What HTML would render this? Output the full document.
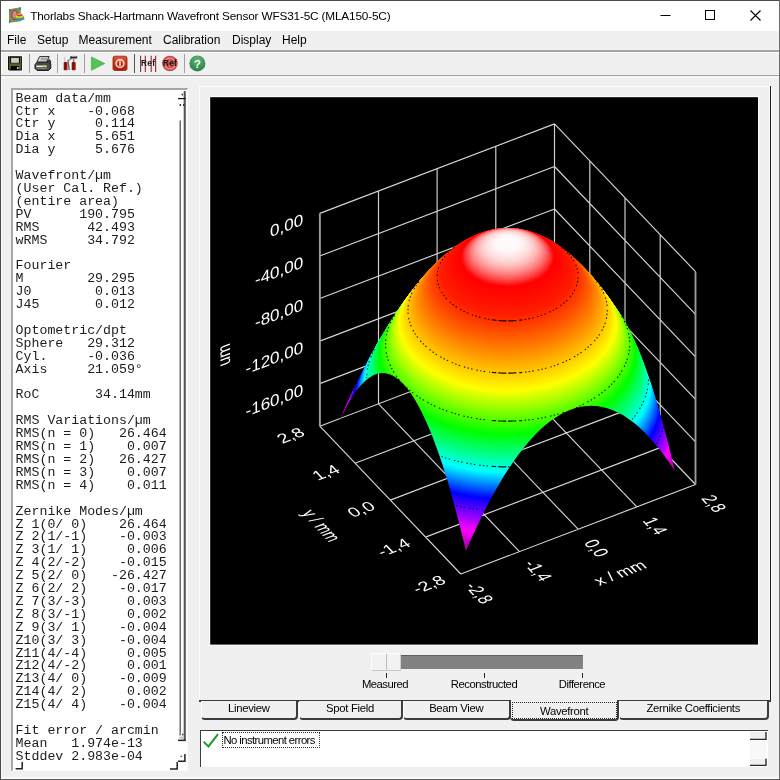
<!DOCTYPE html>
<html lang="en">
<head>
<meta charset="utf-8">
<title>Thorlabs Shack-Hartmann Wavefront Sensor WFS31-5C (MLA150-5C)</title>
<style>
html,body{margin:0;padding:0;background:#f0f0f0;}
body{width:780px;height:780px;overflow:hidden;position:relative;font-family:"Liberation Sans",sans-serif;}
#win{position:absolute;left:0;top:0;width:780px;height:780px;background:#f0f0f0;overflow:hidden;will-change:transform;}
#win>*{position:absolute;}
.bd{background:#4a4a4a;}
#title{left:1px;top:1px;width:778px;height:30px;background:#fff;}
#ttext{left:30.2px;top:9px;font-size:11.8px;line-height:15px;color:#000;white-space:nowrap;letter-spacing:-0.17px;}
#menu{left:1px;top:31px;width:778px;height:19.5px;background:#f0f0f0;}
#menu span{position:absolute;top:2.2px;font-size:12px;line-height:15px;color:#000;white-space:nowrap;}
.hl{height:1px;left:1px;width:778px;}
.vs{width:1.1px;top:54px;height:19px;background:#a0a0a0;}
#lp{left:11px;top:87.5px;width:177px;height:683px;background:#fff;border-top:2.2px solid #a6a6a6;border-left:2.4px solid #a6a6a6;border-right:1.5px solid #fafafa;border-bottom:1.5px solid #fafafa;box-sizing:border-box;}
#data{margin:0;left:15.6px;top:92.6px;font-family:"Liberation Mono",monospace;font-size:13.25px;line-height:12.905px;color:#1c1c1c;white-space:pre;}
.plot{left:0;top:0;}
.tab{box-sizing:border-box;height:19.3px;top:700.5px;background:#f0f0f0;border-right:2.2px solid #3c3c3c;border-bottom:2.4px solid #3c3c3c;border-left:1px solid #fff;border-radius:0 0 4px 4px;font-size:11.3px;line-height:15px;text-align:center;color:#000;white-space:nowrap;letter-spacing:-0.3px;}
.lbl{font-size:11.3px;line-height:14px;color:#000;white-space:nowrap;text-align:center;width:120px;letter-spacing:-0.5px;}
.tick{width:1px;height:5px;background:#222;top:672.7px;}

</style>
</head>
<body>
<div id="win">
<div class="bd" style="left:0;top:0;width:780px;height:1px"></div>
<div class="bd" style="left:0;top:0;width:1px;height:780px"></div>
<div class="bd" style="left:779px;top:0;width:1px;height:780px;background:#6e6e6e"></div>
<div class="bd" style="left:0;top:778.6px;width:780px;height:1.4px;background:#5a5a5a"></div>
<div style="left:1px;top:31px;width:1.2px;height:747px;background:#fbfbfb"></div>
<div style="left:1px;top:777.3px;width:778px;height:1.3px;background:#fbfbfb"></div>
<div id="title"></div>
<svg style="left:8px;top:6px" width="18" height="18" viewBox="8 6 18 18">
 <path d="M9 9.2L20.8 7.2V21.2L9 22.8Z" fill="#6a9a62"/>
 <path d="M9 9.2L11 8.9V11.5L9 12Z M9 20L10.5 21V22.6L9 22.8Z M19 7.5L20.8 7.2V10L19 9Z" fill="#3f7f7a"/>
 <ellipse cx="14.6" cy="14.8" rx="4.4" ry="6.4" fill="#8c8a3c"/>
 <ellipse cx="14.6" cy="14.8" rx="3.4" ry="5.2" fill="#a34a34"/>
 <ellipse cx="14.6" cy="14.8" rx="2.1" ry="3.8" fill="#c78a96"/>
 <path d="M15.4 19.6Q16.5 14 19.6 13.6Q23 14 24.6 19.2Q20 21.6 15.4 19.6Z" fill="#3a7ad0"/>
 <path d="M15.2 18.6Q16.6 13.8 19.6 13.6Q22.8 14 24.4 18.2Q20 20 15.2 18.6Z" fill="#4cb848"/>
 <path d="M15.6 17.2Q17 13.8 19.6 13.6Q22.2 13.9 23.6 16.8Q19.8 18.4 15.6 17.2Z" fill="#f0dc30"/>
 <path d="M16.6 16Q17.6 13.7 19.6 13.6Q21.6 13.8 22.6 15.6Q19.6 17 16.6 16Z" fill="#e0301c"/>
 <ellipse cx="19.4" cy="14.4" rx="1.3" ry="0.6" fill="#f6b0a0"/>
</svg>
<div id="ttext">Thorlabs Shack-Hartmann Wavefront Sensor WFS31-5C (MLA150-5C)</div>
<svg style="left:654.3px;top:4px" width="120" height="24" viewBox="0 0 120 24">
 <path d="M6.5 11.5H16.5" stroke="#000" stroke-width="1" fill="none"/>
 <rect x="51.5" y="6.5" width="9" height="9" stroke="#000" stroke-width="1" fill="none"/>
 <path d="M96.5 6.5L106.5 16.5M106.5 6.5L96.5 16.5" stroke="#000" stroke-width="1.1" fill="none"/>
</svg>
<div id="menu">
 <span style="left:6px">File</span>
 <span style="left:36px">Setup</span>
 <span style="left:77.5px">Measurement</span>
 <span style="left:162px">Calibration</span>
 <span style="left:231px">Display</span>
 <span style="left:281px">Help</span>
</div>
<div class="hl" style="top:50.3px;background:#a5a5a5;height:1.3px"></div>
<div class="hl" style="top:51.6px;background:#fafafa"></div>
<div class="hl" style="top:75.2px;background:#a5a5a5;height:1.3px"></div>
<div class="hl" style="top:76.5px;background:#fafafa"></div>
<div class="vs" style="left:28.8px"></div>
<div class="vs" style="left:56.6px"></div>
<div class="vs" style="left:84.2px"></div>
<div class="vs" style="left:134px;background:#555"></div>
<div class="vs" style="left:183.8px"></div>
<!-- toolbar icons -->
<svg style="left:0;top:52px" width="215" height="24" viewBox="0 52 215 24">
 <!-- save -->
 <rect x="7.4" y="55.6" width="15" height="15.4" rx="1" fill="#fbfbfb"/>
 <path d="M8 56.2H21.9V70.4H9L8 69.4Z" fill="#0c0c08"/>
 <rect x="9.2" y="57.2" width="11.6" height="12.2" fill="#6a6a30"/>
 <rect x="10" y="56.8" width="10" height="6.8" fill="#141410"/>
 <rect x="11.1" y="57.9" width="7.8" height="4.9" fill="#c9cbc6"/>
 <rect x="10.6" y="65.9" width="8.6" height="4.2" fill="#050505"/>
 <circle cx="17.8" cy="67.9" r="0.95" fill="#f4f4f4"/>
 <rect x="9.2" y="63.6" width="11.6" height="1" fill="#55551e"/>
 <!-- printer -->
 <path d="M39.6 56.6H49.2L46.6 62.2H36.8Z" fill="#dcdcdc" stroke="#2a2a2a" stroke-width="1"/>
 <path d="M41 58.4H47.4M40.3 59.8H46.8" stroke="#777" stroke-width="0.7"/>
 <path d="M35 64.4L37.2 62.2H48.8L50.8 64V68.2L48.6 70.4H37L35 68.4Z" fill="#4a4a4a" stroke="#151515" stroke-width="1"/>
 <path d="M46.8 62.2L49.2 59.4L50.6 61V64" fill="#3a3a3a" stroke="#151515" stroke-width="0.8"/>
 <rect x="36.2" y="65.6" width="10.4" height="1.5" fill="#f4f4f0"/>
 <rect x="42.2" y="65.6" width="4" height="1.5" fill="#c8d838"/>
 <rect x="36.4" y="67.8" width="10.6" height="1" fill="#8a8a8a"/>
 <!-- setup -->
 <rect x="63.7" y="62" width="3.8" height="8.2" rx="0.8" fill="#a01616"/>
 <rect x="71.7" y="62" width="4" height="8.2" rx="0.8" fill="#a01616"/>
 <rect x="64.6" y="62.8" width="1" height="6.6" fill="#5c0a0a"/>
 <rect x="72.7" y="62.8" width="1" height="6.6" fill="#5c0a0a"/>
 <path d="M64.8 56.8V62" stroke="#c4c4c4" stroke-width="1.1"/>
 <path d="M68 60.5L69.2 70" stroke="#666" stroke-width="1.4"/>
 <path d="M73.6 62V59" stroke="#777" stroke-width="1.4"/>
 <path d="M67.4 61L72 58.2" stroke="#888" stroke-width="1.4"/>
 <path d="M70.2 57.4H77.2" stroke="#2a2a2a" stroke-width="2.2"/>
 <path d="M72 56.4L76 56.2" stroke="#b0b0b0" stroke-width="0.8"/>
 <!-- play -->
 <path d="M91.4 56.9L104.8 63.6L91.4 70.3Z" fill="#55c257" stroke="#48a84a" stroke-width="0.7" stroke-linejoin="round"/>
 <!-- stop -->
 <defs><linearGradient id="stg" x1="0" y1="0" x2="0" y2="1"><stop offset="0" stop-color="#e2583a"/><stop offset="0.45" stop-color="#cc3418"/><stop offset="1" stop-color="#a8200c"/></linearGradient></defs>
 <rect x="113" y="56.2" width="14" height="14.2" rx="1.8" fill="url(#stg)" stroke="#8e1c0a" stroke-width="0.8"/>
 <circle cx="120" cy="63.5" r="3.9" fill="none" stroke="#fbd6c8" stroke-width="1.6"/>
 <path d="M120 60.8V66" stroke="#fbd6c8" stroke-width="1.5"/>
 <!-- Ref -->
 <path d="M140.6 55.8V72M145.3 55.8V72M151.2 55.8V72M155.6 55.8V72" stroke="#96282a" stroke-width="1.1"/>
 <text x="148.2" y="66.4" font-size="8.2" font-weight="bold" text-anchor="middle" fill="#111" font-family="'Liberation Sans',sans-serif" letter-spacing="0.4">Ref</text>
 <!-- Ref circle -->
 <circle cx="169.9" cy="63.5" r="7.8" fill="#c94a4a"/>
 <circle cx="169.9" cy="63.5" r="5.4" fill="none" stroke="#e69a9a" stroke-width="1.2"/>
 <circle cx="169.9" cy="63.5" r="2.6" fill="none" stroke="#e69a9a" stroke-width="1"/>
 <text x="170" y="66.3" font-size="8.2" font-weight="bold" text-anchor="middle" fill="#1a0a0a" font-family="'Liberation Sans',sans-serif" letter-spacing="0.3">Ref</text>
 <!-- help -->
 <defs><radialGradient id="hg" cx="0.5" cy="0.3" r="0.75"><stop offset="0" stop-color="#63b57c"/><stop offset="0.6" stop-color="#3d9455"/><stop offset="1" stop-color="#2c7a42"/></radialGradient></defs>
 <circle cx="197.4" cy="63.4" r="8" fill="url(#hg)"/>
 <text x="197.5" y="67.6" font-size="11.5" font-weight="bold" text-anchor="middle" fill="#f8fff8" font-family="'Liberation Sans',sans-serif">?</text>
</svg>
<!-- left data panel -->
<div id="lp"></div>
<svg style="left:170px;top:88px" width="20" height="684" viewBox="170 88 20 684">
 <rect x="183.7" y="91" width="2.1" height="650" fill="#555"/>
 <rect x="179.5" y="120.5" width="1.5" height="613" fill="#6a6a6a"/>
 <rect x="178" y="98" width="7.5" height="1.2" fill="#111"/>
 <rect x="181.6" y="93.8" width="1.4" height="1.6" fill="#222"/>
 <rect x="179.6" y="104" width="1.4" height="2" fill="#333"/><rect x="183" y="104" width="1.4" height="2" fill="#333"/>
 <rect x="178" y="739.6" width="7.6" height="1.5" fill="#222"/><rect x="179.4" y="733.6" width="1.4" height="1.8" fill="#444"/><rect x="182" y="733.6" width="1.4" height="1.8" fill="#444"/><rect x="179.4" y="736.6" width="4" height="2" fill="#bbb"/>
 <path d="M178 761.2H184.9V754" stroke="#222" stroke-width="1.5" fill="none"/><rect x="180.4" y="755.8" width="1.8" height="1" fill="#333"/>
 <path d="M169.6 769H177.2V762" stroke="#222" stroke-width="1.5" fill="none"/>
</svg>
<svg style="left:12px;top:758px" width="14" height="14" viewBox="12 758 14 14">
 <path d="M15.6 768.8H22.2V762" stroke="#222" stroke-width="1.5" fill="none"/>
</svg>
<!-- tab page frame -->
<div style="left:198.5px;top:86px;width:572px;height:1px;background:#fbfbfb"></div>
<div style="left:198.5px;top:86px;width:1px;height:615px;background:#fbfbfb"></div>
<div style="left:768.7px;top:86px;width:3.4px;height:614px;background:#fafafa"></div>
<div style="left:769.9px;top:86px;width:1.15px;height:615.5px;background:#1e1e1e"></div>
<div style="left:198.5px;top:699.6px;width:572.3px;height:2.1px;background:#3a3a3a"></div>
<!-- slider -->
<div style="left:401px;top:655px;width:181.5px;height:14px;background:#828282;border-top:1px solid #5e5e5e;box-sizing:border-box"></div>
<div style="left:370.5px;top:653px;width:30.5px;height:17.5px;background:#f2f2f2;box-sizing:border-box;border:1px solid #fdfdfd;border-right-color:#d0d0d0;border-bottom-color:#c8c8c8"></div>
<div style="left:385.5px;top:654px;width:1px;height:15.5px;background:#bdbdbd"></div>
<div class="tick" style="left:385.5px"></div>
<div class="tick" style="left:483.5px"></div>
<div class="tick" style="left:581.5px"></div>
<div class="lbl" style="left:325px;top:677px">Measured</div>
<div class="lbl" style="left:424px;top:677px">Reconstructed</div>
<div class="lbl" style="left:522px;top:677px">Difference</div>
<!-- tabs -->
<div class="tab" style="left:200.5px;width:97.5px">Lineview</div>
<div class="tab" style="left:298.5px;width:104px">Spot Field</div>
<div class="tab" style="left:403px;width:107.5px">Beam View</div>
<div class="tab" style="left:618.5px;width:150.5px">Zernike Coefficients</div>
<div class="tab" style="left:510.3px;width:108.7px;top:699.5px;height:21.6px;border-left:1.6px solid #3c3c3c;line-height:17px;padding-top:3.8px">Wavefront</div>
<div style="left:512.2px;top:702.4px;width:105px;height:16.6px;border:1px dotted #222;box-sizing:border-box"></div>
<!-- status panel -->
<div style="left:199.5px;top:730px;width:568px;height:37px;background:#fff;box-sizing:border-box;border-top:1.5px solid #3c3c3c;border-left:1.5px solid #3c3c3c"></div>
<svg style="left:201px;top:731px" width="22" height="20" viewBox="201 731 22 20">
 <path d="M203.6 741.6L208.4 746.4L218 734.2" stroke="#1d9a2a" stroke-width="2" fill="none" stroke-linejoin="miter"/>
</svg>
<div style="left:221.5px;top:732px;width:98px;height:15.5px;border:1px dotted #333;box-sizing:border-box"></div>
<div style="left:223.5px;top:733.3px;font-size:11.3px;line-height:14px;color:#000;white-space:nowrap;letter-spacing:-0.58px">No instrument errors</div>
<svg style="left:748px;top:730px" width="22" height="40" viewBox="748 730 22 40">
 <rect x="750" y="732" width="16.5" height="7.5" fill="#efefef"/>
 <path d="M750 739.4H766V732" stroke="#2a2a2a" stroke-width="1.4" fill="none"/>
 <rect x="750" y="759" width="16.5" height="6.5" fill="#efefef"/>
 <path d="M750 765.4H766V758.5" stroke="#2a2a2a" stroke-width="1.4" fill="none"/>
 <rect x="750" y="740.5" width="16.5" height="18" fill="#f8f8f8"/>
</svg>

<pre id="data">Beam data/mm
Ctr x    -0.068
Ctr y     0.114
Dia x     5.651
Dia y     5.676

Wavefront/µm
(User Cal. Ref.)
(entire area)
PV      190.795
RMS      42.493
wRMS     34.792

Fourier
M        29.295
J0        0.013
J45       0.012

Optometric/dpt
Sphere   29.312
Cyl.     -0.036
Axis     21.059°

RoC       34.14mm

RMS Variations/µm
RMS(n = 0)   26.464
RMS(n = 1)    0.007
RMS(n = 2)   26.427
RMS(n = 3)    0.007
RMS(n = 4)    0.011

Zernike Modes/µm
Z 1(0/ 0)    26.464
Z 2(1/-1)    -0.003
Z 3(1/ 1)     0.006
Z 4(2/-2)    -0.015
Z 5(2/ 0)   -26.427
Z 6(2/ 2)    -0.017
Z 7(3/-3)     0.003
Z 8(3/-1)     0.002
Z 9(3/ 1)    -0.004
Z10(3/ 3)    -0.004
Z11(4/-4)     0.005
Z12(4/-2)     0.001
Z13(4/ 0)    -0.009
Z14(4/ 2)     0.002
Z15(4/ 4)    -0.004

Fit error / arcmin
Mean   1.974e-13
Stddev 2.983e-04</pre>
<svg class="plot" width="780" height="780" viewBox="0 0 780 780">
<rect x="209.1" y="96.1" width="549.9" height="549.5" fill="#fcfcfc"/>
<rect x="210.2" y="97.2" width="547.8" height="547.4" fill="#000"/>
<path id="grid" d="M460.8 574L319.8 426.2M460.8 574L695.5 484.5M319.8 426.2L319.8 213.4M695.5 484.5L695.5 271.7M519.5 551.6L378.5 403.8M425.5 537.1L660.2 447.6M378.5 403.8L378.5 191M660.2 447.6L660.2 234.8M578.1 529.2L437.1 381.5M390.3 500.1L625 410.6M437.1 381.5L437.1 168.7M625 410.6L625 197.8M636.8 506.9L495.8 359.1M355 463.2L589.8 373.7M495.8 359.1L495.8 146.3M589.8 373.7L589.8 160.9M695.5 484.5L554.5 336.7M319.8 426.2L554.5 336.7M554.5 336.7L554.5 123.9M554.5 336.7L554.5 123.9M319.8 213.4L554.5 123.9M554.5 123.9L695.5 271.7M319.8 256L554.5 166.5M554.5 166.5L695.5 314.3M319.8 298.5L554.5 209M554.5 209L695.5 356.8M319.8 341.1L554.5 251.6M554.5 251.6L695.5 399.4M319.8 383.6L554.5 294.1M554.5 294.1L695.5 441.9M319.8 426.2L554.5 336.7M554.5 336.7L695.5 484.5" fill="none" stroke="#d4d4d4" stroke-width="1.15"/>
<path d="M319.8 426.2L319.8 213.4M695.5 484.5L695.5 271.7" stroke="#9a9a9a" stroke-width="1.8" fill="none"/>
<g id="surf">
<path d="M-2.495 -2.495H2.495V2.495H-2.495Z" transform="translate(507.6 445.227) matrix(41.911 -15.982 -25.179 -26.393 0 0)" fill="#960096"/>
<path d="M2.495 -2.487V2.487A3.523 3.523 0 0 1 2.487 2.495H-2.487A3.523 3.523 0 0 1 -2.495 2.487V-2.487A3.523 3.523 0 0 1 -2.487 -2.495H2.487A3.523 3.523 0 0 1 2.495 -2.487Z" transform="translate(507.6 444.613) matrix(41.911 -15.982 -25.179 -26.393 0 0)" fill="#9a009a"/>
<path d="M2.495 -2.48V2.48A3.518 3.518 0 0 1 2.48 2.495H-2.48A3.518 3.518 0 0 1 -2.495 2.48V-2.48A3.518 3.518 0 0 1 -2.48 -2.495H2.48A3.518 3.518 0 0 1 2.495 -2.48Z" transform="translate(507.6 443.999) matrix(41.911 -15.982 -25.179 -26.393 0 0)" fill="#9e009e"/>
<path d="M2.495 -2.472V2.472A3.512 3.512 0 0 1 2.472 2.495H-2.472A3.512 3.512 0 0 1 -2.495 2.472V-2.472A3.512 3.512 0 0 1 -2.472 -2.495H2.472A3.512 3.512 0 0 1 2.495 -2.472Z" transform="translate(507.6 443.384) matrix(41.911 -15.982 -25.179 -26.393 0 0)" fill="#a200a2"/>
<path d="M2.495 -2.465V2.465A3.507 3.507 0 0 1 2.465 2.495H-2.465A3.507 3.507 0 0 1 -2.495 2.465V-2.465A3.507 3.507 0 0 1 -2.465 -2.495H2.465A3.507 3.507 0 0 1 2.495 -2.465Z" transform="translate(507.6 442.77) matrix(41.911 -15.982 -25.179 -26.393 0 0)" fill="#a600a6"/>
<path d="M2.495 -2.457V2.457A3.502 3.502 0 0 1 2.457 2.495H-2.457A3.502 3.502 0 0 1 -2.495 2.457V-2.457A3.502 3.502 0 0 1 -2.457 -2.495H2.457A3.502 3.502 0 0 1 2.495 -2.457Z" transform="translate(507.6 442.156) matrix(41.911 -15.982 -25.179 -26.393 0 0)" fill="#aa00aa"/>
<path d="M2.495 -2.449V2.449A3.496 3.496 0 0 1 2.449 2.495H-2.449A3.496 3.496 0 0 1 -2.495 2.449V-2.449A3.496 3.496 0 0 1 -2.449 -2.495H2.449A3.496 3.496 0 0 1 2.495 -2.449Z" transform="translate(507.6 441.542) matrix(41.911 -15.982 -25.179 -26.393 0 0)" fill="#ae00ae"/>
<path d="M2.495 -2.442V2.442A3.491 3.491 0 0 1 2.442 2.495H-2.442A3.491 3.491 0 0 1 -2.495 2.442V-2.442A3.491 3.491 0 0 1 -2.442 -2.495H2.442A3.491 3.491 0 0 1 2.495 -2.442Z" transform="translate(507.6 440.928) matrix(41.911 -15.982 -25.179 -26.393 0 0)" fill="#b200b2"/>
<path d="M2.495 -2.434V2.434A3.485 3.485 0 0 1 2.434 2.495H-2.434A3.485 3.485 0 0 1 -2.495 2.434V-2.434A3.485 3.485 0 0 1 -2.434 -2.495H2.434A3.485 3.485 0 0 1 2.495 -2.434Z" transform="translate(507.6 440.313) matrix(41.911 -15.982 -25.179 -26.393 0 0)" fill="#b600b6"/>
<path d="M2.495 -2.426V2.426A3.48 3.48 0 0 1 2.426 2.495H-2.426A3.48 3.48 0 0 1 -2.495 2.426V-2.426A3.48 3.48 0 0 1 -2.426 -2.495H2.426A3.48 3.48 0 0 1 2.495 -2.426Z" transform="translate(507.6 439.699) matrix(41.911 -15.982 -25.179 -26.393 0 0)" fill="#ba00ba"/>
<path d="M2.495 -2.418V2.418A3.475 3.475 0 0 1 2.418 2.495H-2.418A3.475 3.475 0 0 1 -2.495 2.418V-2.418A3.475 3.475 0 0 1 -2.418 -2.495H2.418A3.475 3.475 0 0 1 2.495 -2.418Z" transform="translate(507.6 439.085) matrix(41.911 -15.982 -25.179 -26.393 0 0)" fill="#be00be"/>
<path d="M2.495 -2.41V2.41A3.469 3.469 0 0 1 2.41 2.495H-2.41A3.469 3.469 0 0 1 -2.495 2.41V-2.41A3.469 3.469 0 0 1 -2.41 -2.495H2.41A3.469 3.469 0 0 1 2.495 -2.41Z" transform="translate(507.6 438.471) matrix(41.911 -15.982 -25.179 -26.393 0 0)" fill="#c200c2"/>
<path d="M2.495 -2.403V2.403A3.464 3.464 0 0 1 2.403 2.495H-2.403A3.464 3.464 0 0 1 -2.495 2.403V-2.403A3.464 3.464 0 0 1 -2.403 -2.495H2.403A3.464 3.464 0 0 1 2.495 -2.403Z" transform="translate(507.6 437.857) matrix(41.911 -15.982 -25.179 -26.393 0 0)" fill="#c600c6"/>
<path d="M2.495 -2.395V2.395A3.458 3.458 0 0 1 2.395 2.495H-2.395A3.458 3.458 0 0 1 -2.495 2.395V-2.395A3.458 3.458 0 0 1 -2.395 -2.495H2.395A3.458 3.458 0 0 1 2.495 -2.395Z" transform="translate(507.6 437.243) matrix(41.911 -15.982 -25.179 -26.393 0 0)" fill="#ca00ca"/>
<path d="M2.495 -2.387V2.387A3.453 3.453 0 0 1 2.387 2.495H-2.387A3.453 3.453 0 0 1 -2.495 2.387V-2.387A3.453 3.453 0 0 1 -2.387 -2.495H2.387A3.453 3.453 0 0 1 2.495 -2.387Z" transform="translate(507.6 436.628) matrix(41.911 -15.982 -25.179 -26.393 0 0)" fill="#ce00ce"/>
<path d="M2.495 -2.379V2.379A3.447 3.447 0 0 1 2.379 2.495H-2.379A3.447 3.447 0 0 1 -2.495 2.379V-2.379A3.447 3.447 0 0 1 -2.379 -2.495H2.379A3.447 3.447 0 0 1 2.495 -2.379Z" transform="translate(507.6 436.014) matrix(41.911 -15.982 -25.179 -26.393 0 0)" fill="#d200d2"/>
<path d="M2.495 -2.371V2.371A3.442 3.442 0 0 1 2.371 2.495H-2.371A3.442 3.442 0 0 1 -2.495 2.371V-2.371A3.442 3.442 0 0 1 -2.371 -2.495H2.371A3.442 3.442 0 0 1 2.495 -2.371Z" transform="translate(507.6 435.4) matrix(41.911 -15.982 -25.179 -26.393 0 0)" fill="#d600d6"/>
<path d="M2.495 -2.363V2.363A3.436 3.436 0 0 1 2.363 2.495H-2.363A3.436 3.436 0 0 1 -2.495 2.363V-2.363A3.436 3.436 0 0 1 -2.363 -2.495H2.363A3.436 3.436 0 0 1 2.495 -2.363Z" transform="translate(507.6 434.786) matrix(41.911 -15.982 -25.179 -26.393 0 0)" fill="#da00da"/>
<path d="M2.495 -2.355V2.355A3.431 3.431 0 0 1 2.355 2.495H-2.355A3.431 3.431 0 0 1 -2.495 2.355V-2.355A3.431 3.431 0 0 1 -2.355 -2.495H2.355A3.431 3.431 0 0 1 2.495 -2.355Z" transform="translate(507.6 434.172) matrix(41.911 -15.982 -25.179 -26.393 0 0)" fill="#de00de"/>
<path d="M2.495 -2.347V2.347A3.425 3.425 0 0 1 2.347 2.495H-2.347A3.425 3.425 0 0 1 -2.495 2.347V-2.347A3.425 3.425 0 0 1 -2.347 -2.495H2.347A3.425 3.425 0 0 1 2.495 -2.347Z" transform="translate(507.6 433.558) matrix(41.911 -15.982 -25.179 -26.393 0 0)" fill="#e200e2"/>
<path d="M2.495 -2.339V2.339A3.42 3.42 0 0 1 2.339 2.495H-2.339A3.42 3.42 0 0 1 -2.495 2.339V-2.339A3.42 3.42 0 0 1 -2.339 -2.495H2.339A3.42 3.42 0 0 1 2.495 -2.339Z" transform="translate(507.6 432.943) matrix(41.911 -15.982 -25.179 -26.393 0 0)" fill="#e600e6"/>
<path d="M2.495 -2.331V2.331A3.414 3.414 0 0 1 2.331 2.495H-2.331A3.414 3.414 0 0 1 -2.495 2.331V-2.331A3.414 3.414 0 0 1 -2.331 -2.495H2.331A3.414 3.414 0 0 1 2.495 -2.331Z" transform="translate(507.6 432.329) matrix(41.911 -15.982 -25.179 -26.393 0 0)" fill="#ea00ea"/>
<path d="M2.495 -2.323V2.323A3.409 3.409 0 0 1 2.323 2.495H-2.323A3.409 3.409 0 0 1 -2.495 2.323V-2.323A3.409 3.409 0 0 1 -2.323 -2.495H2.323A3.409 3.409 0 0 1 2.495 -2.323Z" transform="translate(507.6 431.715) matrix(41.911 -15.982 -25.179 -26.393 0 0)" fill="#ee00ee"/>
<path d="M2.495 -2.315V2.315A3.403 3.403 0 0 1 2.315 2.495H-2.315A3.403 3.403 0 0 1 -2.495 2.315V-2.315A3.403 3.403 0 0 1 -2.315 -2.495H2.315A3.403 3.403 0 0 1 2.495 -2.315Z" transform="translate(507.6 431.101) matrix(41.911 -15.982 -25.179 -26.393 0 0)" fill="#f100f1"/>
<path d="M2.495 -2.306V2.306A3.398 3.398 0 0 1 2.306 2.495H-2.306A3.398 3.398 0 0 1 -2.495 2.306V-2.306A3.398 3.398 0 0 1 -2.306 -2.495H2.306A3.398 3.398 0 0 1 2.495 -2.306Z" transform="translate(507.6 430.487) matrix(41.911 -15.982 -25.179 -26.393 0 0)" fill="#f500f5"/>
<path d="M2.495 -2.298V2.298A3.392 3.392 0 0 1 2.298 2.495H-2.298A3.392 3.392 0 0 1 -2.495 2.298V-2.298A3.392 3.392 0 0 1 -2.298 -2.495H2.298A3.392 3.392 0 0 1 2.495 -2.298Z" transform="translate(507.6 429.873) matrix(41.911 -15.982 -25.179 -26.393 0 0)" fill="#f900f9"/>
<path d="M2.495 -2.29V2.29A3.387 3.387 0 0 1 2.29 2.495H-2.29A3.387 3.387 0 0 1 -2.495 2.29V-2.29A3.387 3.387 0 0 1 -2.29 -2.495H2.29A3.387 3.387 0 0 1 2.495 -2.29Z" transform="translate(507.6 429.258) matrix(41.911 -15.982 -25.179 -26.393 0 0)" fill="#fd00fd"/>
<path d="M2.495 -2.282V2.282A3.381 3.381 0 0 1 2.282 2.495H-2.282A3.381 3.381 0 0 1 -2.495 2.282V-2.282A3.381 3.381 0 0 1 -2.282 -2.495H2.282A3.381 3.381 0 0 1 2.495 -2.282Z" transform="translate(507.6 428.644) matrix(41.911 -15.982 -25.179 -26.393 0 0)" fill="#fb00ff"/>
<path d="M2.495 -2.273V2.273A3.375 3.375 0 0 1 2.273 2.495H-2.273A3.375 3.375 0 0 1 -2.495 2.273V-2.273A3.375 3.375 0 0 1 -2.273 -2.495H2.273A3.375 3.375 0 0 1 2.495 -2.273Z" transform="translate(507.6 428.03) matrix(41.911 -15.982 -25.179 -26.393 0 0)" fill="#f500ff"/>
<path d="M2.495 -2.265V2.265A3.37 3.37 0 0 1 2.265 2.495H-2.265A3.37 3.37 0 0 1 -2.495 2.265V-2.265A3.37 3.37 0 0 1 -2.265 -2.495H2.265A3.37 3.37 0 0 1 2.495 -2.265Z" transform="translate(507.6 427.416) matrix(41.911 -15.982 -25.179 -26.393 0 0)" fill="#f000ff"/>
<path d="M2.495 -2.257V2.257A3.364 3.364 0 0 1 2.257 2.495H-2.257A3.364 3.364 0 0 1 -2.495 2.257V-2.257A3.364 3.364 0 0 1 -2.257 -2.495H2.257A3.364 3.364 0 0 1 2.495 -2.257Z" transform="translate(507.6 426.802) matrix(41.911 -15.982 -25.179 -26.393 0 0)" fill="#ea00ff"/>
<path d="M2.495 -2.248V2.248A3.359 3.359 0 0 1 2.248 2.495H-2.248A3.359 3.359 0 0 1 -2.495 2.248V-2.248A3.359 3.359 0 0 1 -2.248 -2.495H2.248A3.359 3.359 0 0 1 2.495 -2.248Z" transform="translate(507.6 426.188) matrix(41.911 -15.982 -25.179 -26.393 0 0)" fill="#e400ff"/>
<path d="M2.495 -2.24V2.24A3.353 3.353 0 0 1 2.24 2.495H-2.24A3.353 3.353 0 0 1 -2.495 2.24V-2.24A3.353 3.353 0 0 1 -2.24 -2.495H2.24A3.353 3.353 0 0 1 2.495 -2.24Z" transform="translate(507.6 425.573) matrix(41.911 -15.982 -25.179 -26.393 0 0)" fill="#de00ff"/>
<path d="M2.495 -2.232V2.232A3.347 3.347 0 0 1 2.232 2.495H-2.232A3.347 3.347 0 0 1 -2.495 2.232V-2.232A3.347 3.347 0 0 1 -2.232 -2.495H2.232A3.347 3.347 0 0 1 2.495 -2.232Z" transform="translate(507.6 424.959) matrix(41.911 -15.982 -25.179 -26.393 0 0)" fill="#d800ff"/>
<path d="M2.495 -2.223V2.223A3.342 3.342 0 0 1 2.223 2.495H-2.223A3.342 3.342 0 0 1 -2.495 2.223V-2.223A3.342 3.342 0 0 1 -2.223 -2.495H2.223A3.342 3.342 0 0 1 2.495 -2.223Z" transform="translate(507.6 424.345) matrix(41.911 -15.982 -25.179 -26.393 0 0)" fill="#d200ff"/>
<path d="M2.495 -2.215V2.215A3.336 3.336 0 0 1 2.215 2.495H-2.215A3.336 3.336 0 0 1 -2.495 2.215V-2.215A3.336 3.336 0 0 1 -2.215 -2.495H2.215A3.336 3.336 0 0 1 2.495 -2.215Z" transform="translate(507.6 423.731) matrix(41.911 -15.982 -25.179 -26.393 0 0)" fill="#cc00ff"/>
<path d="M2.495 -2.206V2.206A3.33 3.33 0 0 1 2.206 2.495H-2.206A3.33 3.33 0 0 1 -2.495 2.206V-2.206A3.33 3.33 0 0 1 -2.206 -2.495H2.206A3.33 3.33 0 0 1 2.495 -2.206Z" transform="translate(507.6 423.117) matrix(41.911 -15.982 -25.179 -26.393 0 0)" fill="#c600ff"/>
<path d="M2.495 -2.198V2.198A3.325 3.325 0 0 1 2.198 2.495H-2.198A3.325 3.325 0 0 1 -2.495 2.198V-2.198A3.325 3.325 0 0 1 -2.198 -2.495H2.198A3.325 3.325 0 0 1 2.495 -2.198Z" transform="translate(507.6 422.502) matrix(41.911 -15.982 -25.179 -26.393 0 0)" fill="#c000ff"/>
<path d="M2.495 -2.189V2.189A3.319 3.319 0 0 1 2.189 2.495H-2.189A3.319 3.319 0 0 1 -2.495 2.189V-2.189A3.319 3.319 0 0 1 -2.189 -2.495H2.189A3.319 3.319 0 0 1 2.495 -2.189Z" transform="translate(507.6 421.888) matrix(41.911 -15.982 -25.179 -26.393 0 0)" fill="#ba00ff"/>
<path d="M2.495 -2.18V2.18A3.313 3.313 0 0 1 2.18 2.495H-2.18A3.313 3.313 0 0 1 -2.495 2.18V-2.18A3.313 3.313 0 0 1 -2.18 -2.495H2.18A3.313 3.313 0 0 1 2.495 -2.18Z" transform="translate(507.6 421.274) matrix(41.911 -15.982 -25.179 -26.393 0 0)" fill="#b400ff"/>
<path d="M2.495 -2.172V2.172A3.308 3.308 0 0 1 2.172 2.495H-2.172A3.308 3.308 0 0 1 -2.495 2.172V-2.172A3.308 3.308 0 0 1 -2.172 -2.495H2.172A3.308 3.308 0 0 1 2.495 -2.172Z" transform="translate(507.6 420.66) matrix(41.911 -15.982 -25.179 -26.393 0 0)" fill="#ae00ff"/>
<path d="M2.495 -2.163V2.163A3.302 3.302 0 0 1 2.163 2.495H-2.163A3.302 3.302 0 0 1 -2.495 2.163V-2.163A3.302 3.302 0 0 1 -2.163 -2.495H2.163A3.302 3.302 0 0 1 2.495 -2.163Z" transform="translate(507.6 420.046) matrix(41.911 -15.982 -25.179 -26.393 0 0)" fill="#a800ff"/>
<path d="M2.495 -2.154V2.154A3.296 3.296 0 0 1 2.154 2.495H-2.154A3.296 3.296 0 0 1 -2.495 2.154V-2.154A3.296 3.296 0 0 1 -2.154 -2.495H2.154A3.296 3.296 0 0 1 2.495 -2.154Z" transform="translate(507.6 419.432) matrix(41.911 -15.982 -25.179 -26.393 0 0)" fill="#a200ff"/>
<path d="M2.495 -2.145V2.145A3.291 3.291 0 0 1 2.145 2.495H-2.145A3.291 3.291 0 0 1 -2.495 2.145V-2.145A3.291 3.291 0 0 1 -2.145 -2.495H2.145A3.291 3.291 0 0 1 2.495 -2.145Z" transform="translate(507.6 418.817) matrix(41.911 -15.982 -25.179 -26.393 0 0)" fill="#9c00ff"/>
<path d="M2.495 -2.137V2.137A3.285 3.285 0 0 1 2.137 2.495H-2.137A3.285 3.285 0 0 1 -2.495 2.137V-2.137A3.285 3.285 0 0 1 -2.137 -2.495H2.137A3.285 3.285 0 0 1 2.495 -2.137Z" transform="translate(507.6 418.203) matrix(41.911 -15.982 -25.179 -26.393 0 0)" fill="#9600ff"/>
<path d="M2.495 -2.128V2.128A3.279 3.279 0 0 1 2.128 2.495H-2.128A3.279 3.279 0 0 1 -2.495 2.128V-2.128A3.279 3.279 0 0 1 -2.128 -2.495H2.128A3.279 3.279 0 0 1 2.495 -2.128Z" transform="translate(507.6 417.589) matrix(41.911 -15.982 -25.179 -26.393 0 0)" fill="#9000ff"/>
<path d="M2.495 -2.119V2.119A3.273 3.273 0 0 1 2.119 2.495H-2.119A3.273 3.273 0 0 1 -2.495 2.119V-2.119A3.273 3.273 0 0 1 -2.119 -2.495H2.119A3.273 3.273 0 0 1 2.495 -2.119Z" transform="translate(507.6 416.975) matrix(41.911 -15.982 -25.179 -26.393 0 0)" fill="#8a00ff"/>
<path d="M2.495 -2.11V2.11A3.268 3.268 0 0 1 2.11 2.495H-2.11A3.268 3.268 0 0 1 -2.495 2.11V-2.11A3.268 3.268 0 0 1 -2.11 -2.495H2.11A3.268 3.268 0 0 1 2.495 -2.11Z" transform="translate(507.6 416.361) matrix(41.911 -15.982 -25.179 -26.393 0 0)" fill="#8500ff"/>
<path d="M2.495 -2.101V2.101A3.262 3.262 0 0 1 2.101 2.495H-2.101A3.262 3.262 0 0 1 -2.495 2.101V-2.101A3.262 3.262 0 0 1 -2.101 -2.495H2.101A3.262 3.262 0 0 1 2.495 -2.101Z" transform="translate(507.6 415.747) matrix(41.911 -15.982 -25.179 -26.393 0 0)" fill="#7f00ff"/>
<path d="M2.495 -2.092V2.092A3.256 3.256 0 0 1 2.092 2.495H-2.092A3.256 3.256 0 0 1 -2.495 2.092V-2.092A3.256 3.256 0 0 1 -2.092 -2.495H2.092A3.256 3.256 0 0 1 2.495 -2.092Z" transform="translate(507.6 415.132) matrix(41.911 -15.982 -25.179 -26.393 0 0)" fill="#7900ff"/>
<path d="M2.495 -2.083V2.083A3.25 3.25 0 0 1 2.083 2.495H-2.083A3.25 3.25 0 0 1 -2.495 2.083V-2.083A3.25 3.25 0 0 1 -2.083 -2.495H2.083A3.25 3.25 0 0 1 2.495 -2.083Z" transform="translate(507.6 414.518) matrix(41.911 -15.982 -25.179 -26.393 0 0)" fill="#7300ff"/>
<path d="M2.495 -2.074V2.074A3.244 3.244 0 0 1 2.074 2.495H-2.074A3.244 3.244 0 0 1 -2.495 2.074V-2.074A3.244 3.244 0 0 1 -2.074 -2.495H2.074A3.244 3.244 0 0 1 2.495 -2.074Z" transform="translate(507.6 413.904) matrix(41.911 -15.982 -25.179 -26.393 0 0)" fill="#6d00ff"/>
<path d="M2.495 -2.065V2.065A3.239 3.239 0 0 1 2.065 2.495H-2.065A3.239 3.239 0 0 1 -2.495 2.065V-2.065A3.239 3.239 0 0 1 -2.065 -2.495H2.065A3.239 3.239 0 0 1 2.495 -2.065Z" transform="translate(507.6 413.29) matrix(41.911 -15.982 -25.179 -26.393 0 0)" fill="#6700ff"/>
<path d="M2.495 -2.056V2.056A3.233 3.233 0 0 1 2.056 2.495H-2.056A3.233 3.233 0 0 1 -2.495 2.056V-2.056A3.233 3.233 0 0 1 -2.056 -2.495H2.056A3.233 3.233 0 0 1 2.495 -2.056Z" transform="translate(507.6 412.676) matrix(41.911 -15.982 -25.179 -26.393 0 0)" fill="#6100ff"/>
<path d="M2.495 -2.046V2.046A3.227 3.227 0 0 1 2.046 2.495H-2.046A3.227 3.227 0 0 1 -2.495 2.046V-2.046A3.227 3.227 0 0 1 -2.046 -2.495H2.046A3.227 3.227 0 0 1 2.495 -2.046Z" transform="translate(507.6 412.062) matrix(41.911 -15.982 -25.179 -26.393 0 0)" fill="#5b00ff"/>
<path d="M2.495 -2.037V2.037A3.221 3.221 0 0 1 2.037 2.495H-2.037A3.221 3.221 0 0 1 -2.495 2.037V-2.037A3.221 3.221 0 0 1 -2.037 -2.495H2.037A3.221 3.221 0 0 1 2.495 -2.037Z" transform="translate(507.6 411.447) matrix(41.911 -15.982 -25.179 -26.393 0 0)" fill="#5500ff"/>
<path d="M2.495 -2.028V2.028A3.215 3.215 0 0 1 2.028 2.495H-2.028A3.215 3.215 0 0 1 -2.495 2.028V-2.028A3.215 3.215 0 0 1 -2.028 -2.495H2.028A3.215 3.215 0 0 1 2.495 -2.028Z" transform="translate(507.6 410.833) matrix(41.911 -15.982 -25.179 -26.393 0 0)" fill="#4f00ff"/>
<path d="M2.495 -2.019V2.019A3.209 3.209 0 0 1 2.019 2.495H-2.019A3.209 3.209 0 0 1 -2.495 2.019V-2.019A3.209 3.209 0 0 1 -2.019 -2.495H2.019A3.209 3.209 0 0 1 2.495 -2.019Z" transform="translate(507.6 410.219) matrix(41.911 -15.982 -25.179 -26.393 0 0)" fill="#4900ff"/>
<path d="M2.495 -2.009V2.009A3.203 3.203 0 0 1 2.009 2.495H-2.009A3.203 3.203 0 0 1 -2.495 2.009V-2.009A3.203 3.203 0 0 1 -2.009 -2.495H2.009A3.203 3.203 0 0 1 2.495 -2.009Z" transform="translate(507.6 409.605) matrix(41.911 -15.982 -25.179 -26.393 0 0)" fill="#4300ff"/>
<path d="M2.495 -2V2A3.198 3.198 0 0 1 2 2.495H-2A3.198 3.198 0 0 1 -2.495 2V-2A3.198 3.198 0 0 1 -2 -2.495H2A3.198 3.198 0 0 1 2.495 -2Z" transform="translate(507.6 408.991) matrix(41.911 -15.982 -25.179 -26.393 0 0)" fill="#3d00ff"/>
<path d="M2.495 -1.99V1.99A3.192 3.192 0 0 1 1.99 2.495H-1.99A3.192 3.192 0 0 1 -2.495 1.99V-1.99A3.192 3.192 0 0 1 -1.99 -2.495H1.99A3.192 3.192 0 0 1 2.495 -1.99Z" transform="translate(507.6 408.377) matrix(41.911 -15.982 -25.179 -26.393 0 0)" fill="#3700ff"/>
<path d="M2.495 -1.981V1.981A3.186 3.186 0 0 1 1.981 2.495H-1.981A3.186 3.186 0 0 1 -2.495 1.981V-1.981A3.186 3.186 0 0 1 -1.981 -2.495H1.981A3.186 3.186 0 0 1 2.495 -1.981Z" transform="translate(507.6 407.762) matrix(41.911 -15.982 -25.179 -26.393 0 0)" fill="#3100ff"/>
<path d="M2.495 -1.971V1.971A3.18 3.18 0 0 1 1.971 2.495H-1.971A3.18 3.18 0 0 1 -2.495 1.971V-1.971A3.18 3.18 0 0 1 -1.971 -2.495H1.971A3.18 3.18 0 0 1 2.495 -1.971Z" transform="translate(507.6 407.148) matrix(41.911 -15.982 -25.179 -26.393 0 0)" fill="#2b00ff"/>
<path d="M2.495 -1.962V1.962A3.174 3.174 0 0 1 1.962 2.495H-1.962A3.174 3.174 0 0 1 -2.495 1.962V-1.962A3.174 3.174 0 0 1 -1.962 -2.495H1.962A3.174 3.174 0 0 1 2.495 -1.962Z" transform="translate(507.6 406.534) matrix(41.911 -15.982 -25.179 -26.393 0 0)" fill="#2500ff"/>
<path d="M2.495 -1.952V1.952A3.168 3.168 0 0 1 1.952 2.495H-1.952A3.168 3.168 0 0 1 -2.495 1.952V-1.952A3.168 3.168 0 0 1 -1.952 -2.495H1.952A3.168 3.168 0 0 1 2.495 -1.952Z" transform="translate(507.6 405.92) matrix(41.911 -15.982 -25.179 -26.393 0 0)" fill="#2000ff"/>
<path d="M2.495 -1.942V1.942A3.162 3.162 0 0 1 1.942 2.495H-1.942A3.162 3.162 0 0 1 -2.495 1.942V-1.942A3.162 3.162 0 0 1 -1.942 -2.495H1.942A3.162 3.162 0 0 1 2.495 -1.942Z" transform="translate(507.6 405.306) matrix(41.911 -15.982 -25.179 -26.393 0 0)" fill="#1a00ff"/>
<path d="M2.495 -1.933V1.933A3.156 3.156 0 0 1 1.933 2.495H-1.933A3.156 3.156 0 0 1 -2.495 1.933V-1.933A3.156 3.156 0 0 1 -1.933 -2.495H1.933A3.156 3.156 0 0 1 2.495 -1.933Z" transform="translate(507.6 404.691) matrix(41.911 -15.982 -25.179 -26.393 0 0)" fill="#1400ff"/>
<path d="M2.495 -1.923V1.923A3.15 3.15 0 0 1 1.923 2.495H-1.923A3.15 3.15 0 0 1 -2.495 1.923V-1.923A3.15 3.15 0 0 1 -1.923 -2.495H1.923A3.15 3.15 0 0 1 2.495 -1.923Z" transform="translate(507.6 404.077) matrix(41.911 -15.982 -25.179 -26.393 0 0)" fill="#0e00ff"/>
<path d="M2.495 -1.913V1.913A3.144 3.144 0 0 1 1.913 2.495H-1.913A3.144 3.144 0 0 1 -2.495 1.913V-1.913A3.144 3.144 0 0 1 -1.913 -2.495H1.913A3.144 3.144 0 0 1 2.495 -1.913Z" transform="translate(507.6 403.463) matrix(41.911 -15.982 -25.179 -26.393 0 0)" fill="#0800ff"/>
<path d="M2.495 -1.903V1.903A3.138 3.138 0 0 1 1.903 2.495H-1.903A3.138 3.138 0 0 1 -2.495 1.903V-1.903A3.138 3.138 0 0 1 -1.903 -2.495H1.903A3.138 3.138 0 0 1 2.495 -1.903Z" transform="translate(507.6 402.849) matrix(41.911 -15.982 -25.179 -26.393 0 0)" fill="#0200ff"/>
<path d="M2.495 -1.893V1.893A3.132 3.132 0 0 1 1.893 2.495H-1.893A3.132 3.132 0 0 1 -2.495 1.893V-1.893A3.132 3.132 0 0 1 -1.893 -2.495H1.893A3.132 3.132 0 0 1 2.495 -1.893Z" transform="translate(507.6 402.235) matrix(41.911 -15.982 -25.179 -26.393 0 0)" fill="#0005ff"/>
<path d="M2.495 -1.883V1.883A3.126 3.126 0 0 1 1.883 2.495H-1.883A3.126 3.126 0 0 1 -2.495 1.883V-1.883A3.126 3.126 0 0 1 -1.883 -2.495H1.883A3.126 3.126 0 0 1 2.495 -1.883Z" transform="translate(507.6 401.621) matrix(41.911 -15.982 -25.179 -26.393 0 0)" fill="#000dff"/>
<path d="M2.495 -1.873V1.873A3.12 3.12 0 0 1 1.873 2.495H-1.873A3.12 3.12 0 0 1 -2.495 1.873V-1.873A3.12 3.12 0 0 1 -1.873 -2.495H1.873A3.12 3.12 0 0 1 2.495 -1.873Z" transform="translate(507.6 401.006) matrix(41.911 -15.982 -25.179 -26.393 0 0)" fill="#0015ff"/>
<path d="M2.495 -1.863V1.863A3.114 3.114 0 0 1 1.863 2.495H-1.863A3.114 3.114 0 0 1 -2.495 1.863V-1.863A3.114 3.114 0 0 1 -1.863 -2.495H1.863A3.114 3.114 0 0 1 2.495 -1.863Z" transform="translate(507.6 400.392) matrix(41.911 -15.982 -25.179 -26.393 0 0)" fill="#001dff"/>
<path d="M2.495 -1.853V1.853A3.108 3.108 0 0 1 1.853 2.495H-1.853A3.108 3.108 0 0 1 -2.495 1.853V-1.853A3.108 3.108 0 0 1 -1.853 -2.495H1.853A3.108 3.108 0 0 1 2.495 -1.853Z" transform="translate(507.6 399.778) matrix(41.911 -15.982 -25.179 -26.393 0 0)" fill="#0024ff"/>
<path d="M2.495 -1.843V1.843A3.102 3.102 0 0 1 1.843 2.495H-1.843A3.102 3.102 0 0 1 -2.495 1.843V-1.843A3.102 3.102 0 0 1 -1.843 -2.495H1.843A3.102 3.102 0 0 1 2.495 -1.843Z" transform="translate(507.6 399.164) matrix(41.911 -15.982 -25.179 -26.393 0 0)" fill="#002cff"/>
<path d="M2.495 -1.832V1.832A3.096 3.096 0 0 1 1.832 2.495H-1.832A3.096 3.096 0 0 1 -2.495 1.832V-1.832A3.096 3.096 0 0 1 -1.832 -2.495H1.832A3.096 3.096 0 0 1 2.495 -1.832Z" transform="translate(507.6 398.55) matrix(41.911 -15.982 -25.179 -26.393 0 0)" fill="#0034ff"/>
<path d="M2.495 -1.822V1.822A3.09 3.09 0 0 1 1.822 2.495H-1.822A3.09 3.09 0 0 1 -2.495 1.822V-1.822A3.09 3.09 0 0 1 -1.822 -2.495H1.822A3.09 3.09 0 0 1 2.495 -1.822Z" transform="translate(507.6 397.936) matrix(41.911 -15.982 -25.179 -26.393 0 0)" fill="#003cff"/>
<path d="M2.495 -1.812V1.812A3.083 3.083 0 0 1 1.812 2.495H-1.812A3.083 3.083 0 0 1 -2.495 1.812V-1.812A3.083 3.083 0 0 1 -1.812 -2.495H1.812A3.083 3.083 0 0 1 2.495 -1.812Z" transform="translate(507.6 397.321) matrix(41.911 -15.982 -25.179 -26.393 0 0)" fill="#0043ff"/>
<path d="M2.495 -1.801V1.801A3.077 3.077 0 0 1 1.801 2.495H-1.801A3.077 3.077 0 0 1 -2.495 1.801V-1.801A3.077 3.077 0 0 1 -1.801 -2.495H1.801A3.077 3.077 0 0 1 2.495 -1.801Z" transform="translate(507.6 396.707) matrix(41.911 -15.982 -25.179 -26.393 0 0)" fill="#004bff"/>
<path d="M2.495 -1.791V1.791A3.071 3.071 0 0 1 1.791 2.495H-1.791A3.071 3.071 0 0 1 -2.495 1.791V-1.791A3.071 3.071 0 0 1 -1.791 -2.495H1.791A3.071 3.071 0 0 1 2.495 -1.791Z" transform="translate(507.6 396.093) matrix(41.911 -15.982 -25.179 -26.393 0 0)" fill="#0053ff"/>
<path d="M2.495 -1.78V1.78A3.065 3.065 0 0 1 1.78 2.495H-1.78A3.065 3.065 0 0 1 -2.495 1.78V-1.78A3.065 3.065 0 0 1 -1.78 -2.495H1.78A3.065 3.065 0 0 1 2.495 -1.78Z" transform="translate(507.6 395.479) matrix(41.911 -15.982 -25.179 -26.393 0 0)" fill="#005aff"/>
<path d="M2.495 -1.77V1.77A3.059 3.059 0 0 1 1.77 2.495H-1.77A3.059 3.059 0 0 1 -2.495 1.77V-1.77A3.059 3.059 0 0 1 -1.77 -2.495H1.77A3.059 3.059 0 0 1 2.495 -1.77Z" transform="translate(507.6 394.865) matrix(41.911 -15.982 -25.179 -26.393 0 0)" fill="#0062ff"/>
<path d="M2.495 -1.759V1.759A3.053 3.053 0 0 1 1.759 2.495H-1.759A3.053 3.053 0 0 1 -2.495 1.759V-1.759A3.053 3.053 0 0 1 -1.759 -2.495H1.759A3.053 3.053 0 0 1 2.495 -1.759Z" transform="translate(507.6 394.251) matrix(41.911 -15.982 -25.179 -26.393 0 0)" fill="#006aff"/>
<path d="M2.495 -1.748V1.748A3.046 3.046 0 0 1 1.748 2.495H-1.748A3.046 3.046 0 0 1 -2.495 1.748V-1.748A3.046 3.046 0 0 1 -1.748 -2.495H1.748A3.046 3.046 0 0 1 2.495 -1.748Z" transform="translate(507.6 393.636) matrix(41.911 -15.982 -25.179 -26.393 0 0)" fill="#0072ff"/>
<path d="M2.495 -1.737V1.737A3.04 3.04 0 0 1 1.737 2.495H-1.737A3.04 3.04 0 0 1 -2.495 1.737V-1.737A3.04 3.04 0 0 1 -1.737 -2.495H1.737A3.04 3.04 0 0 1 2.495 -1.737Z" transform="translate(507.6 393.022) matrix(41.911 -15.982 -25.179 -26.393 0 0)" fill="#0079ff"/>
<path d="M2.495 -1.726V1.726A3.034 3.034 0 0 1 1.726 2.495H-1.726A3.034 3.034 0 0 1 -2.495 1.726V-1.726A3.034 3.034 0 0 1 -1.726 -2.495H1.726A3.034 3.034 0 0 1 2.495 -1.726Z" transform="translate(507.6 392.408) matrix(41.911 -15.982 -25.179 -26.393 0 0)" fill="#0081ff"/>
<path d="M2.495 -1.715V1.715A3.028 3.028 0 0 1 1.715 2.495H-1.715A3.028 3.028 0 0 1 -2.495 1.715V-1.715A3.028 3.028 0 0 1 -1.715 -2.495H1.715A3.028 3.028 0 0 1 2.495 -1.715Z" transform="translate(507.6 391.794) matrix(41.911 -15.982 -25.179 -26.393 0 0)" fill="#0089ff"/>
<path d="M2.495 -1.704V1.704A3.022 3.022 0 0 1 1.704 2.495H-1.704A3.022 3.022 0 0 1 -2.495 1.704V-1.704A3.022 3.022 0 0 1 -1.704 -2.495H1.704A3.022 3.022 0 0 1 2.495 -1.704Z" transform="translate(507.6 391.18) matrix(41.911 -15.982 -25.179 -26.393 0 0)" fill="#0091ff"/>
<path d="M2.495 -1.693V1.693A3.015 3.015 0 0 1 1.693 2.495H-1.693A3.015 3.015 0 0 1 -2.495 1.693V-1.693A3.015 3.015 0 0 1 -1.693 -2.495H1.693A3.015 3.015 0 0 1 2.495 -1.693Z" transform="translate(507.6 390.566) matrix(41.911 -15.982 -25.179 -26.393 0 0)" fill="#0098ff"/>
<path d="M2.495 -1.682V1.682A3.009 3.009 0 0 1 1.682 2.495H-1.682A3.009 3.009 0 0 1 -2.495 1.682V-1.682A3.009 3.009 0 0 1 -1.682 -2.495H1.682A3.009 3.009 0 0 1 2.495 -1.682Z" transform="translate(507.6 389.951) matrix(41.911 -15.982 -25.179 -26.393 0 0)" fill="#00a0ff"/>
<path d="M2.495 -1.671V1.671A3.003 3.003 0 0 1 1.671 2.495H-1.671A3.003 3.003 0 0 1 -2.495 1.671V-1.671A3.003 3.003 0 0 1 -1.671 -2.495H1.671A3.003 3.003 0 0 1 2.495 -1.671Z" transform="translate(507.6 389.337) matrix(41.911 -15.982 -25.179 -26.393 0 0)" fill="#00a8ff"/>
<path d="M2.495 -1.66V1.66A2.997 2.997 0 0 1 1.66 2.495H-1.66A2.997 2.997 0 0 1 -2.495 1.66V-1.66A2.997 2.997 0 0 1 -1.66 -2.495H1.66A2.997 2.997 0 0 1 2.495 -1.66Z" transform="translate(507.6 388.723) matrix(41.911 -15.982 -25.179 -26.393 0 0)" fill="#00afff"/>
<path d="M2.495 -1.648V1.648A2.99 2.99 0 0 1 1.648 2.495H-1.648A2.99 2.99 0 0 1 -2.495 1.648V-1.648A2.99 2.99 0 0 1 -1.648 -2.495H1.648A2.99 2.99 0 0 1 2.495 -1.648Z" transform="translate(507.6 388.109) matrix(41.911 -15.982 -25.179 -26.393 0 0)" fill="#00b7ff"/>
<path d="M2.495 -1.637V1.637A2.984 2.984 0 0 1 1.637 2.495H-1.637A2.984 2.984 0 0 1 -2.495 1.637V-1.637A2.984 2.984 0 0 1 -1.637 -2.495H1.637A2.984 2.984 0 0 1 2.495 -1.637Z" transform="translate(507.6 387.495) matrix(41.911 -15.982 -25.179 -26.393 0 0)" fill="#00bfff"/>
<path d="M2.495 -1.625V1.625A2.978 2.978 0 0 1 1.625 2.495H-1.625A2.978 2.978 0 0 1 -2.495 1.625V-1.625A2.978 2.978 0 0 1 -1.625 -2.495H1.625A2.978 2.978 0 0 1 2.495 -1.625Z" transform="translate(507.6 386.88) matrix(41.911 -15.982 -25.179 -26.393 0 0)" fill="#00c7ff"/>
<path d="M2.495 -1.613V1.613A2.971 2.971 0 0 1 1.613 2.495H-1.613A2.971 2.971 0 0 1 -2.495 1.613V-1.613A2.971 2.971 0 0 1 -1.613 -2.495H1.613A2.971 2.971 0 0 1 2.495 -1.613Z" transform="translate(507.6 386.266) matrix(41.911 -15.982 -25.179 -26.393 0 0)" fill="#00ceff"/>
<path d="M2.495 -1.602V1.602A2.965 2.965 0 0 1 1.602 2.495H-1.602A2.965 2.965 0 0 1 -2.495 1.602V-1.602A2.965 2.965 0 0 1 -1.602 -2.495H1.602A2.965 2.965 0 0 1 2.495 -1.602Z" transform="translate(507.6 385.652) matrix(41.911 -15.982 -25.179 -26.393 0 0)" fill="#00d6ff"/>
<path d="M2.495 -1.59V1.59A2.959 2.959 0 0 1 1.59 2.495H-1.59A2.959 2.959 0 0 1 -2.495 1.59V-1.59A2.959 2.959 0 0 1 -1.59 -2.495H1.59A2.959 2.959 0 0 1 2.495 -1.59Z" transform="translate(507.6 385.038) matrix(41.911 -15.982 -25.179 -26.393 0 0)" fill="#00deff"/>
<path d="M2.495 -1.578V1.578A2.952 2.952 0 0 1 1.578 2.495H-1.578A2.952 2.952 0 0 1 -2.495 1.578V-1.578A2.952 2.952 0 0 1 -1.578 -2.495H1.578A2.952 2.952 0 0 1 2.495 -1.578Z" transform="translate(507.6 384.424) matrix(41.911 -15.982 -25.179 -26.393 0 0)" fill="#00e6ff"/>
<path d="M2.495 -1.566V1.566A2.946 2.946 0 0 1 1.566 2.495H-1.566A2.946 2.946 0 0 1 -2.495 1.566V-1.566A2.946 2.946 0 0 1 -1.566 -2.495H1.566A2.946 2.946 0 0 1 2.495 -1.566Z" transform="translate(507.6 383.81) matrix(41.911 -15.982 -25.179 -26.393 0 0)" fill="#00edff"/>
<path d="M2.495 -1.554V1.554A2.939 2.939 0 0 1 1.554 2.495H-1.554A2.939 2.939 0 0 1 -2.495 1.554V-1.554A2.939 2.939 0 0 1 -1.554 -2.495H1.554A2.939 2.939 0 0 1 2.495 -1.554Z" transform="translate(507.6 383.195) matrix(41.911 -15.982 -25.179 -26.393 0 0)" fill="#00f5ff"/>
<path d="M2.495 -1.542V1.542A2.933 2.933 0 0 1 1.542 2.495H-1.542A2.933 2.933 0 0 1 -2.495 1.542V-1.542A2.933 2.933 0 0 1 -1.542 -2.495H1.542A2.933 2.933 0 0 1 2.495 -1.542Z" transform="translate(507.6 382.581) matrix(41.911 -15.982 -25.179 -26.393 0 0)" fill="#00fdff"/>
<path d="M2.495 -1.529V1.529A2.926 2.926 0 0 1 1.529 2.495H-1.529A2.926 2.926 0 0 1 -2.495 1.529V-1.529A2.926 2.926 0 0 1 -1.529 -2.495H1.529A2.926 2.926 0 0 1 2.495 -1.529Z" transform="translate(507.6 381.967) matrix(41.911 -15.982 -25.179 -26.393 0 0)" fill="#00fffb"/>
<path d="M2.495 -1.517V1.517A2.92 2.92 0 0 1 1.517 2.495H-1.517A2.92 2.92 0 0 1 -2.495 1.517V-1.517A2.92 2.92 0 0 1 -1.517 -2.495H1.517A2.92 2.92 0 0 1 2.495 -1.517Z" transform="translate(507.6 381.353) matrix(41.911 -15.982 -25.179 -26.393 0 0)" fill="#00fff6"/>
<path d="M2.495 -1.505V1.505A2.914 2.914 0 0 1 1.505 2.495H-1.505A2.914 2.914 0 0 1 -2.495 1.505V-1.505A2.914 2.914 0 0 1 -1.505 -2.495H1.505A2.914 2.914 0 0 1 2.495 -1.505Z" transform="translate(507.6 380.739) matrix(41.911 -15.982 -25.179 -26.393 0 0)" fill="#00fff0"/>
<path d="M2.495 -1.492V1.492A2.907 2.907 0 0 1 1.492 2.495H-1.492A2.907 2.907 0 0 1 -2.495 1.492V-1.492A2.907 2.907 0 0 1 -1.492 -2.495H1.492A2.907 2.907 0 0 1 2.495 -1.492Z" transform="translate(507.6 380.125) matrix(41.911 -15.982 -25.179 -26.393 0 0)" fill="#00ffeb"/>
<path d="M2.495 -1.479V1.479A2.901 2.901 0 0 1 1.479 2.495H-1.479A2.901 2.901 0 0 1 -2.495 1.479V-1.479A2.901 2.901 0 0 1 -1.479 -2.495H1.479A2.901 2.901 0 0 1 2.495 -1.479Z" transform="translate(507.6 379.51) matrix(41.911 -15.982 -25.179 -26.393 0 0)" fill="#00ffe5"/>
<path d="M2.495 -1.466V1.466A2.894 2.894 0 0 1 1.466 2.495H-1.466A2.894 2.894 0 0 1 -2.495 1.466V-1.466A2.894 2.894 0 0 1 -1.466 -2.495H1.466A2.894 2.894 0 0 1 2.495 -1.466Z" transform="translate(507.6 378.896) matrix(41.911 -15.982 -25.179 -26.393 0 0)" fill="#00ffe0"/>
<path d="M2.495 -1.454V1.454A2.888 2.888 0 0 1 1.454 2.495H-1.454A2.888 2.888 0 0 1 -2.495 1.454V-1.454A2.888 2.888 0 0 1 -1.454 -2.495H1.454A2.888 2.888 0 0 1 2.495 -1.454Z" transform="translate(507.6 378.282) matrix(41.911 -15.982 -25.179 -26.393 0 0)" fill="#00ffda"/>
<path d="M2.495 -1.44V1.44A2.881 2.881 0 0 1 1.44 2.495H-1.44A2.881 2.881 0 0 1 -2.495 1.44V-1.44A2.881 2.881 0 0 1 -1.44 -2.495H1.44A2.881 2.881 0 0 1 2.495 -1.44Z" transform="translate(507.6 377.668) matrix(41.911 -15.982 -25.179 -26.393 0 0)" fill="#00ffd4"/>
<path d="M2.495 -1.427V1.427A2.874 2.874 0 0 1 1.427 2.495H-1.427A2.874 2.874 0 0 1 -2.495 1.427V-1.427A2.874 2.874 0 0 1 -1.427 -2.495H1.427A2.874 2.874 0 0 1 2.495 -1.427Z" transform="translate(507.6 377.054) matrix(41.911 -15.982 -25.179 -26.393 0 0)" fill="#00ffcf"/>
<path d="M2.495 -1.414V1.414A2.868 2.868 0 0 1 1.414 2.495H-1.414A2.868 2.868 0 0 1 -2.495 1.414V-1.414A2.868 2.868 0 0 1 -1.414 -2.495H1.414A2.868 2.868 0 0 1 2.495 -1.414Z" transform="translate(507.6 376.44) matrix(41.911 -15.982 -25.179 -26.393 0 0)" fill="#00ffc9"/>
<path d="M2.495 -1.401V1.401A2.861 2.861 0 0 1 1.401 2.495H-1.401A2.861 2.861 0 0 1 -2.495 1.401V-1.401A2.861 2.861 0 0 1 -1.401 -2.495H1.401A2.861 2.861 0 0 1 2.495 -1.401Z" transform="translate(507.6 375.825) matrix(41.911 -15.982 -25.179 -26.393 0 0)" fill="#00ffc4"/>
<path d="M2.495 -1.387V1.387A2.855 2.855 0 0 1 1.387 2.495H-1.387A2.855 2.855 0 0 1 -2.495 1.387V-1.387A2.855 2.855 0 0 1 -1.387 -2.495H1.387A2.855 2.855 0 0 1 2.495 -1.387Z" transform="translate(507.6 375.211) matrix(41.911 -15.982 -25.179 -26.393 0 0)" fill="#00ffbe"/>
<path d="M2.495 -1.373V1.373A2.848 2.848 0 0 1 1.373 2.495H-1.373A2.848 2.848 0 0 1 -2.495 1.373V-1.373A2.848 2.848 0 0 1 -1.373 -2.495H1.373A2.848 2.848 0 0 1 2.495 -1.373Z" transform="translate(507.6 374.597) matrix(41.911 -15.982 -25.179 -26.393 0 0)" fill="#00ffb9"/>
<path d="M2.495 -1.36V1.36A2.841 2.841 0 0 1 1.36 2.495H-1.36A2.841 2.841 0 0 1 -2.495 1.36V-1.36A2.841 2.841 0 0 1 -1.36 -2.495H1.36A2.841 2.841 0 0 1 2.495 -1.36Z" transform="translate(507.6 373.983) matrix(41.911 -15.982 -25.179 -26.393 0 0)" fill="#00ffb3"/>
<path d="M2.495 -1.346V1.346A2.835 2.835 0 0 1 1.346 2.495H-1.346A2.835 2.835 0 0 1 -2.495 1.346V-1.346A2.835 2.835 0 0 1 -1.346 -2.495H1.346A2.835 2.835 0 0 1 2.495 -1.346Z" transform="translate(507.6 373.369) matrix(41.911 -15.982 -25.179 -26.393 0 0)" fill="#00ffae"/>
<path d="M2.495 -1.332V1.332A2.828 2.828 0 0 1 1.332 2.495H-1.332A2.828 2.828 0 0 1 -2.495 1.332V-1.332A2.828 2.828 0 0 1 -1.332 -2.495H1.332A2.828 2.828 0 0 1 2.495 -1.332Z" transform="translate(507.6 372.755) matrix(41.911 -15.982 -25.179 -26.393 0 0)" fill="#00ffa8"/>
<path d="M2.495 -1.317V1.317A2.821 2.821 0 0 1 1.317 2.495H-1.317A2.821 2.821 0 0 1 -2.495 1.317V-1.317A2.821 2.821 0 0 1 -1.317 -2.495H1.317A2.821 2.821 0 0 1 2.495 -1.317Z" transform="translate(507.6 372.14) matrix(41.911 -15.982 -25.179 -26.393 0 0)" fill="#00ffa3"/>
<path d="M2.495 -1.303V1.303A2.815 2.815 0 0 1 1.303 2.495H-1.303A2.815 2.815 0 0 1 -2.495 1.303V-1.303A2.815 2.815 0 0 1 -1.303 -2.495H1.303A2.815 2.815 0 0 1 2.495 -1.303Z" transform="translate(507.6 371.526) matrix(41.911 -15.982 -25.179 -26.393 0 0)" fill="#00ff9d"/>
<path d="M2.495 -1.288V1.288A2.808 2.808 0 0 1 1.288 2.495H-1.288A2.808 2.808 0 0 1 -2.495 1.288V-1.288A2.808 2.808 0 0 1 -1.288 -2.495H1.288A2.808 2.808 0 0 1 2.495 -1.288Z" transform="translate(507.6 370.912) matrix(41.911 -15.982 -25.179 -26.393 0 0)" fill="#00ff98"/>
<path d="M2.495 -1.274V1.274A2.801 2.801 0 0 1 1.274 2.495H-1.274A2.801 2.801 0 0 1 -2.495 1.274V-1.274A2.801 2.801 0 0 1 -1.274 -2.495H1.274A2.801 2.801 0 0 1 2.495 -1.274Z" transform="translate(507.6 370.298) matrix(41.911 -15.982 -25.179 -26.393 0 0)" fill="#00ff92"/>
<path d="M2.495 -1.259V1.259A2.795 2.795 0 0 1 1.259 2.495H-1.259A2.795 2.795 0 0 1 -2.495 1.259V-1.259A2.795 2.795 0 0 1 -1.259 -2.495H1.259A2.795 2.795 0 0 1 2.495 -1.259Z" transform="translate(507.6 369.684) matrix(41.911 -15.982 -25.179 -26.393 0 0)" fill="#00ff8d"/>
<path d="M2.495 -1.244V1.244A2.788 2.788 0 0 1 1.244 2.495H-1.244A2.788 2.788 0 0 1 -2.495 1.244V-1.244A2.788 2.788 0 0 1 -1.244 -2.495H1.244A2.788 2.788 0 0 1 2.495 -1.244Z" transform="translate(507.6 369.069) matrix(41.911 -15.982 -25.179 -26.393 0 0)" fill="#00ff87"/>
<path d="M2.495 -1.228V1.228A2.781 2.781 0 0 1 1.228 2.495H-1.228A2.781 2.781 0 0 1 -2.495 1.228V-1.228A2.781 2.781 0 0 1 -1.228 -2.495H1.228A2.781 2.781 0 0 1 2.495 -1.228Z" transform="translate(507.6 368.455) matrix(41.911 -15.982 -25.179 -26.393 0 0)" fill="#00ff82"/>
<path d="M2.495 -1.213V1.213A2.774 2.774 0 0 1 1.213 2.495H-1.213A2.774 2.774 0 0 1 -2.495 1.213V-1.213A2.774 2.774 0 0 1 -1.213 -2.495H1.213A2.774 2.774 0 0 1 2.495 -1.213Z" transform="translate(507.6 367.841) matrix(41.911 -15.982 -25.179 -26.393 0 0)" fill="#00ff7c"/>
<path d="M2.495 -1.197V1.197A2.767 2.767 0 0 1 1.197 2.495H-1.197A2.767 2.767 0 0 1 -2.495 1.197V-1.197A2.767 2.767 0 0 1 -1.197 -2.495H1.197A2.767 2.767 0 0 1 2.495 -1.197Z" transform="translate(507.6 367.227) matrix(41.911 -15.982 -25.179 -26.393 0 0)" fill="#00ff77"/>
<path d="M2.495 -1.181V1.181A2.761 2.761 0 0 1 1.181 2.495H-1.181A2.761 2.761 0 0 1 -2.495 1.181V-1.181A2.761 2.761 0 0 1 -1.181 -2.495H1.181A2.761 2.761 0 0 1 2.495 -1.181Z" transform="translate(507.6 366.613) matrix(41.911 -15.982 -25.179 -26.393 0 0)" fill="#00ff71"/>
<path d="M2.495 -1.165V1.165A2.754 2.754 0 0 1 1.165 2.495H-1.165A2.754 2.754 0 0 1 -2.495 1.165V-1.165A2.754 2.754 0 0 1 -1.165 -2.495H1.165A2.754 2.754 0 0 1 2.495 -1.165Z" transform="translate(507.6 365.999) matrix(41.911 -15.982 -25.179 -26.393 0 0)" fill="#00ff6c"/>
<path d="M2.495 -1.149V1.149A2.747 2.747 0 0 1 1.149 2.495H-1.149A2.747 2.747 0 0 1 -2.495 1.149V-1.149A2.747 2.747 0 0 1 -1.149 -2.495H1.149A2.747 2.747 0 0 1 2.495 -1.149Z" transform="translate(507.6 365.384) matrix(41.911 -15.982 -25.179 -26.393 0 0)" fill="#00ff66"/>
<path d="M2.495 -1.133V1.133A2.74 2.74 0 0 1 1.133 2.495H-1.133A2.74 2.74 0 0 1 -2.495 1.133V-1.133A2.74 2.74 0 0 1 -1.133 -2.495H1.133A2.74 2.74 0 0 1 2.495 -1.133Z" transform="translate(507.6 364.77) matrix(41.911 -15.982 -25.179 -26.393 0 0)" fill="#00ff61"/>
<path d="M2.495 -1.116V1.116A2.733 2.733 0 0 1 1.116 2.495H-1.116A2.733 2.733 0 0 1 -2.495 1.116V-1.116A2.733 2.733 0 0 1 -1.116 -2.495H1.116A2.733 2.733 0 0 1 2.495 -1.116Z" transform="translate(507.6 364.156) matrix(41.911 -15.982 -25.179 -26.393 0 0)" fill="#00ff5b"/>
<path d="M2.495 -1.099V1.099A2.726 2.726 0 0 1 1.099 2.495H-1.099A2.726 2.726 0 0 1 -2.495 1.099V-1.099A2.726 2.726 0 0 1 -1.099 -2.495H1.099A2.726 2.726 0 0 1 2.495 -1.099Z" transform="translate(507.6 363.542) matrix(41.911 -15.982 -25.179 -26.393 0 0)" fill="#00ff56"/>
<path d="M2.495 -1.081V1.081A2.719 2.719 0 0 1 1.081 2.495H-1.081A2.719 2.719 0 0 1 -2.495 1.081V-1.081A2.719 2.719 0 0 1 -1.081 -2.495H1.081A2.719 2.719 0 0 1 2.495 -1.081Z" transform="translate(507.6 362.928) matrix(41.911 -15.982 -25.179 -26.393 0 0)" fill="#00ff50"/>
<path d="M2.495 -1.064V1.064A2.712 2.712 0 0 1 1.064 2.495H-1.064A2.712 2.712 0 0 1 -2.495 1.064V-1.064A2.712 2.712 0 0 1 -1.064 -2.495H1.064A2.712 2.712 0 0 1 2.495 -1.064Z" transform="translate(507.6 362.314) matrix(41.911 -15.982 -25.179 -26.393 0 0)" fill="#00ff4b"/>
<path d="M2.495 -1.046V1.046A2.705 2.705 0 0 1 1.046 2.495H-1.046A2.705 2.705 0 0 1 -2.495 1.046V-1.046A2.705 2.705 0 0 1 -1.046 -2.495H1.046A2.705 2.705 0 0 1 2.495 -1.046Z" transform="translate(507.6 361.699) matrix(41.911 -15.982 -25.179 -26.393 0 0)" fill="#00ff45"/>
<path d="M2.495 -1.028V1.028A2.698 2.698 0 0 1 1.028 2.495H-1.028A2.698 2.698 0 0 1 -2.495 1.028V-1.028A2.698 2.698 0 0 1 -1.028 -2.495H1.028A2.698 2.698 0 0 1 2.495 -1.028Z" transform="translate(507.6 361.085) matrix(41.911 -15.982 -25.179 -26.393 0 0)" fill="#00ff3f"/>
<path d="M2.495 -1.009V1.009A2.691 2.691 0 0 1 1.009 2.495H-1.009A2.691 2.691 0 0 1 -2.495 1.009V-1.009A2.691 2.691 0 0 1 -1.009 -2.495H1.009A2.691 2.691 0 0 1 2.495 -1.009Z" transform="translate(507.6 360.471) matrix(41.911 -15.982 -25.179 -26.393 0 0)" fill="#00ff3a"/>
<path d="M2.495 -0.99V0.99A2.684 2.684 0 0 1 0.99 2.495H-0.99A2.684 2.684 0 0 1 -2.495 0.99V-0.99A2.684 2.684 0 0 1 -0.99 -2.495H0.99A2.684 2.684 0 0 1 2.495 -0.99Z" transform="translate(507.6 359.857) matrix(41.911 -15.982 -25.179 -26.393 0 0)" fill="#00ff34"/>
<path d="M2.495 -0.971V0.971A2.677 2.677 0 0 1 0.971 2.495H-0.971A2.677 2.677 0 0 1 -2.495 0.971V-0.971A2.677 2.677 0 0 1 -0.971 -2.495H0.971A2.677 2.677 0 0 1 2.495 -0.971Z" transform="translate(507.6 359.243) matrix(41.911 -15.982 -25.179 -26.393 0 0)" fill="#00ff2f"/>
<path d="M2.495 -0.952V0.952A2.67 2.67 0 0 1 0.952 2.495H-0.952A2.67 2.67 0 0 1 -2.495 0.952V-0.952A2.67 2.67 0 0 1 -0.952 -2.495H0.952A2.67 2.67 0 0 1 2.495 -0.952Z" transform="translate(507.6 358.629) matrix(41.911 -15.982 -25.179 -26.393 0 0)" fill="#00ff29"/>
<path d="M2.495 -0.932V0.932A2.663 2.663 0 0 1 0.932 2.495H-0.932A2.663 2.663 0 0 1 -2.495 0.932V-0.932A2.663 2.663 0 0 1 -0.932 -2.495H0.932A2.663 2.663 0 0 1 2.495 -0.932Z" transform="translate(507.6 358.014) matrix(41.911 -15.982 -25.179 -26.393 0 0)" fill="#00ff24"/>
<path d="M2.495 -0.911V0.911A2.656 2.656 0 0 1 0.911 2.495H-0.911A2.656 2.656 0 0 1 -2.495 0.911V-0.911A2.656 2.656 0 0 1 -0.911 -2.495H0.911A2.656 2.656 0 0 1 2.495 -0.911Z" transform="translate(507.6 357.4) matrix(41.911 -15.982 -25.179 -26.393 0 0)" fill="#00ff1e"/>
<path d="M2.495 -0.89V0.89A2.649 2.649 0 0 1 0.89 2.495H-0.89A2.649 2.649 0 0 1 -2.495 0.89V-0.89A2.649 2.649 0 0 1 -0.89 -2.495H0.89A2.649 2.649 0 0 1 2.495 -0.89Z" transform="translate(507.6 356.786) matrix(41.911 -15.982 -25.179 -26.393 0 0)" fill="#00ff19"/>
<path d="M2.495 -0.869V0.869A2.642 2.642 0 0 1 0.869 2.495H-0.869A2.642 2.642 0 0 1 -2.495 0.869V-0.869A2.642 2.642 0 0 1 -0.869 -2.495H0.869A2.642 2.642 0 0 1 2.495 -0.869Z" transform="translate(507.6 356.172) matrix(41.911 -15.982 -25.179 -26.393 0 0)" fill="#00ff13"/>
<path d="M2.495 -0.847V0.847A2.635 2.635 0 0 1 0.847 2.495H-0.847A2.635 2.635 0 0 1 -2.495 0.847V-0.847A2.635 2.635 0 0 1 -0.847 -2.495H0.847A2.635 2.635 0 0 1 2.495 -0.847Z" transform="translate(507.6 355.558) matrix(41.911 -15.982 -25.179 -26.393 0 0)" fill="#00ff0e"/>
<path d="M2.495 -0.824V0.824A2.628 2.628 0 0 1 0.824 2.495H-0.824A2.628 2.628 0 0 1 -2.495 0.824V-0.824A2.628 2.628 0 0 1 -0.824 -2.495H0.824A2.628 2.628 0 0 1 2.495 -0.824Z" transform="translate(507.6 354.944) matrix(41.911 -15.982 -25.179 -26.393 0 0)" fill="#00ff08"/>
<path d="M2.495 -0.801V0.801A2.62 2.62 0 0 1 0.801 2.495H-0.801A2.62 2.62 0 0 1 -2.495 0.801V-0.801A2.62 2.62 0 0 1 -0.801 -2.495H0.801A2.62 2.62 0 0 1 2.495 -0.801Z" transform="translate(507.6 354.329) matrix(41.911 -15.982 -25.179 -26.393 0 0)" fill="#00ff03"/>
<path d="M2.495 -0.777V0.777A2.613 2.613 0 0 1 0.777 2.495H-0.777A2.613 2.613 0 0 1 -2.495 0.777V-0.777A2.613 2.613 0 0 1 -0.777 -2.495H0.777A2.613 2.613 0 0 1 2.495 -0.777Z" transform="translate(507.6 353.715) matrix(41.911 -15.982 -25.179 -26.393 0 0)" fill="#02ff00"/>
<path d="M2.495 -0.752V0.752A2.606 2.606 0 0 1 0.752 2.495H-0.752A2.606 2.606 0 0 1 -2.495 0.752V-0.752A2.606 2.606 0 0 1 -0.752 -2.495H0.752A2.606 2.606 0 0 1 2.495 -0.752Z" transform="translate(507.6 353.101) matrix(41.911 -15.982 -25.179 -26.393 0 0)" fill="#07ff00"/>
<path d="M2.495 -0.727V0.727A2.599 2.599 0 0 1 0.727 2.495H-0.727A2.599 2.599 0 0 1 -2.495 0.727V-0.727A2.599 2.599 0 0 1 -0.727 -2.495H0.727A2.599 2.599 0 0 1 2.495 -0.727Z" transform="translate(507.6 352.487) matrix(41.911 -15.982 -25.179 -26.393 0 0)" fill="#0cff00"/>
<path d="M2.495 -0.7V0.7A2.591 2.591 0 0 1 0.7 2.495H-0.7A2.591 2.591 0 0 1 -2.495 0.7V-0.7A2.591 2.591 0 0 1 -0.7 -2.495H0.7A2.591 2.591 0 0 1 2.495 -0.7Z" transform="translate(507.6 351.873) matrix(41.911 -15.982 -25.179 -26.393 0 0)" fill="#11ff00"/>
<path d="M2.495 -0.673V0.673A2.584 2.584 0 0 1 0.673 2.495H-0.673A2.584 2.584 0 0 1 -2.495 0.673V-0.673A2.584 2.584 0 0 1 -0.673 -2.495H0.673A2.584 2.584 0 0 1 2.495 -0.673Z" transform="translate(507.6 351.258) matrix(41.911 -15.982 -25.179 -26.393 0 0)" fill="#16ff00"/>
<path d="M2.495 -0.644V0.644A2.577 2.577 0 0 1 0.644 2.495H-0.644A2.577 2.577 0 0 1 -2.495 0.644V-0.644A2.577 2.577 0 0 1 -0.644 -2.495H0.644A2.577 2.577 0 0 1 2.495 -0.644Z" transform="translate(507.6 350.644) matrix(41.911 -15.982 -25.179 -26.393 0 0)" fill="#1bff00"/>
<path d="M2.495 -0.614V0.614A2.569 2.569 0 0 1 0.614 2.495H-0.614A2.569 2.569 0 0 1 -2.495 0.614V-0.614A2.569 2.569 0 0 1 -0.614 -2.495H0.614A2.569 2.569 0 0 1 2.495 -0.614Z" transform="translate(507.6 350.03) matrix(41.911 -15.982 -25.179 -26.393 0 0)" fill="#20ff00"/>
<path d="M2.495 -0.583V0.583A2.562 2.562 0 0 1 0.583 2.495H-0.583A2.562 2.562 0 0 1 -2.495 0.583V-0.583A2.562 2.562 0 0 1 -0.583 -2.495H0.583A2.562 2.562 0 0 1 2.495 -0.583Z" transform="translate(507.6 349.416) matrix(41.911 -15.982 -25.179 -26.393 0 0)" fill="#25ff00"/>
<path d="M2.495 -0.549V0.549A2.555 2.555 0 0 1 0.549 2.495H-0.549A2.555 2.555 0 0 1 -2.495 0.549V-0.549A2.555 2.555 0 0 1 -0.549 -2.495H0.549A2.555 2.555 0 0 1 2.495 -0.549Z" transform="translate(507.6 348.802) matrix(41.911 -15.982 -25.179 -26.393 0 0)" fill="#2aff00"/>
<path d="M2.495 -0.514V0.514A2.547 2.547 0 0 1 0.514 2.495H-0.514A2.547 2.547 0 0 1 -2.495 0.514V-0.514A2.547 2.547 0 0 1 -0.514 -2.495H0.514A2.547 2.547 0 0 1 2.495 -0.514Z" transform="translate(507.6 348.188) matrix(41.911 -15.982 -25.179 -26.393 0 0)" fill="#2fff00"/>
<path d="M2.495 -0.476V0.476A2.54 2.54 0 0 1 0.476 2.495H-0.476A2.54 2.54 0 0 1 -2.495 0.476V-0.476A2.54 2.54 0 0 1 -0.476 -2.495H0.476A2.54 2.54 0 0 1 2.495 -0.476Z" transform="translate(507.6 347.573) matrix(41.911 -15.982 -25.179 -26.393 0 0)" fill="#34ff00"/>
<path d="M2.495 -0.434V0.434A2.533 2.533 0 0 1 0.434 2.495H-0.434A2.533 2.533 0 0 1 -2.495 0.434V-0.434A2.533 2.533 0 0 1 -0.434 -2.495H0.434A2.533 2.533 0 0 1 2.495 -0.434Z" transform="translate(507.6 346.959) matrix(41.911 -15.982 -25.179 -26.393 0 0)" fill="#39ff00"/>
<path d="M2.495 -0.388V0.388A2.525 2.525 0 0 1 0.388 2.495H-0.388A2.525 2.525 0 0 1 -2.495 0.388V-0.388A2.525 2.525 0 0 1 -0.388 -2.495H0.388A2.525 2.525 0 0 1 2.495 -0.388Z" transform="translate(507.6 346.345) matrix(41.911 -15.982 -25.179 -26.393 0 0)" fill="#3eff00"/>
<path d="M2.495 -0.336V0.336A2.518 2.518 0 0 1 0.336 2.495H-0.336A2.518 2.518 0 0 1 -2.495 0.336V-0.336A2.518 2.518 0 0 1 -0.336 -2.495H0.336A2.518 2.518 0 0 1 2.495 -0.336Z" transform="translate(507.6 345.731) matrix(41.911 -15.982 -25.179 -26.393 0 0)" fill="#43ff00"/>
<path d="M2.495 -0.275V0.275A2.51 2.51 0 0 1 0.275 2.495H-0.275A2.51 2.51 0 0 1 -2.495 0.275V-0.275A2.51 2.51 0 0 1 -0.275 -2.495H0.275A2.51 2.51 0 0 1 2.495 -0.275Z" transform="translate(507.6 345.117) matrix(41.911 -15.982 -25.179 -26.393 0 0)" fill="#48ff00"/>
<path d="M2.495 -0.194V0.194A2.503 2.503 0 0 1 0.194 2.495H-0.194A2.503 2.503 0 0 1 -2.495 0.194V-0.194A2.503 2.503 0 0 1 -0.194 -2.495H0.194A2.503 2.503 0 0 1 2.495 -0.194Z" transform="translate(507.6 344.503) matrix(41.911 -15.982 -25.179 -26.393 0 0)" fill="#4dff00"/>
<circle r="2.495" transform="translate(507.6 343.888) matrix(41.911 -15.982 -25.179 -26.393 0 0)" fill="#52ff00"/>
<circle r="2.487" transform="translate(507.6 343.274) matrix(41.911 -15.982 -25.179 -26.393 0 0)" fill="#57ff00"/>
<circle r="2.48" transform="translate(507.6 342.66) matrix(41.911 -15.982 -25.179 -26.393 0 0)" fill="#5cff00"/>
<circle r="2.472" transform="translate(507.6 342.046) matrix(41.911 -15.982 -25.179 -26.393 0 0)" fill="#61ff00"/>
<circle r="2.465" transform="translate(507.6 341.432) matrix(41.911 -15.982 -25.179 -26.393 0 0)" fill="#66ff00"/>
<circle r="2.457" transform="translate(507.6 340.818) matrix(41.911 -15.982 -25.179 -26.393 0 0)" fill="#6bff00"/>
<circle r="2.449" transform="translate(507.6 340.203) matrix(41.911 -15.982 -25.179 -26.393 0 0)" fill="#70ff00"/>
<circle r="2.442" transform="translate(507.6 339.589) matrix(41.911 -15.982 -25.179 -26.393 0 0)" fill="#75ff00"/>
<circle r="2.434" transform="translate(507.6 338.975) matrix(41.911 -15.982 -25.179 -26.393 0 0)" fill="#7aff00"/>
<circle r="2.426" transform="translate(507.6 338.361) matrix(41.911 -15.982 -25.179 -26.393 0 0)" fill="#7fff00"/>
<circle r="2.418" transform="translate(507.6 337.747) matrix(41.911 -15.982 -25.179 -26.393 0 0)" fill="#84ff00"/>
<circle r="2.41" transform="translate(507.6 337.133) matrix(41.911 -15.982 -25.179 -26.393 0 0)" fill="#89ff00"/>
<circle r="2.403" transform="translate(507.6 336.518) matrix(41.911 -15.982 -25.179 -26.393 0 0)" fill="#8eff00"/>
<circle r="2.395" transform="translate(507.6 335.904) matrix(41.911 -15.982 -25.179 -26.393 0 0)" fill="#93ff00"/>
<circle r="2.387" transform="translate(507.6 335.29) matrix(41.911 -15.982 -25.179 -26.393 0 0)" fill="#98ff00"/>
<circle r="2.379" transform="translate(507.6 334.676) matrix(41.911 -15.982 -25.179 -26.393 0 0)" fill="#9dff00"/>
<circle r="2.371" transform="translate(507.6 334.062) matrix(41.911 -15.982 -25.179 -26.393 0 0)" fill="#a2ff00"/>
<circle r="2.363" transform="translate(507.6 333.447) matrix(41.911 -15.982 -25.179 -26.393 0 0)" fill="#a7ff00"/>
<circle r="2.355" transform="translate(507.6 332.833) matrix(41.911 -15.982 -25.179 -26.393 0 0)" fill="#acff00"/>
<circle r="2.347" transform="translate(507.6 332.219) matrix(41.911 -15.982 -25.179 -26.393 0 0)" fill="#b1ff00"/>
<circle r="2.339" transform="translate(507.6 331.605) matrix(41.911 -15.982 -25.179 -26.393 0 0)" fill="#b6ff00"/>
<circle r="2.331" transform="translate(507.6 330.991) matrix(41.911 -15.982 -25.179 -26.393 0 0)" fill="#bbff00"/>
<circle r="2.323" transform="translate(507.6 330.377) matrix(41.911 -15.982 -25.179 -26.393 0 0)" fill="#c0ff00"/>
<circle r="2.315" transform="translate(507.6 329.762) matrix(41.911 -15.982 -25.179 -26.393 0 0)" fill="#c5ff00"/>
<circle r="2.306" transform="translate(507.6 329.148) matrix(41.911 -15.982 -25.179 -26.393 0 0)" fill="#caff00"/>
<circle r="2.298" transform="translate(507.6 328.534) matrix(41.911 -15.982 -25.179 -26.393 0 0)" fill="#cfff00"/>
<circle r="2.29" transform="translate(507.6 327.92) matrix(41.911 -15.982 -25.179 -26.393 0 0)" fill="#d4ff00"/>
<circle r="2.282" transform="translate(507.6 327.306) matrix(41.911 -15.982 -25.179 -26.393 0 0)" fill="#d9ff00"/>
<circle r="2.273" transform="translate(507.6 326.692) matrix(41.911 -15.982 -25.179 -26.393 0 0)" fill="#deff00"/>
<circle r="2.265" transform="translate(507.6 326.077) matrix(41.911 -15.982 -25.179 -26.393 0 0)" fill="#e3ff00"/>
<circle r="2.257" transform="translate(507.6 325.463) matrix(41.911 -15.982 -25.179 -26.393 0 0)" fill="#e8ff00"/>
<circle r="2.248" transform="translate(507.6 324.849) matrix(41.911 -15.982 -25.179 -26.393 0 0)" fill="#edff00"/>
<circle r="2.24" transform="translate(507.6 324.235) matrix(41.911 -15.982 -25.179 -26.393 0 0)" fill="#f2ff00"/>
<circle r="2.232" transform="translate(507.6 323.621) matrix(41.911 -15.982 -25.179 -26.393 0 0)" fill="#f7ff00"/>
<circle r="2.223" transform="translate(507.6 323.007) matrix(41.911 -15.982 -25.179 -26.393 0 0)" fill="#fcff00"/>
<circle r="2.215" transform="translate(507.6 322.392) matrix(41.911 -15.982 -25.179 -26.393 0 0)" fill="#fffe00"/>
<circle r="2.206" transform="translate(507.6 321.778) matrix(41.911 -15.982 -25.179 -26.393 0 0)" fill="#fffb00"/>
<circle r="2.198" transform="translate(507.6 321.164) matrix(41.911 -15.982 -25.179 -26.393 0 0)" fill="#fff800"/>
<circle r="2.189" transform="translate(507.6 320.55) matrix(41.911 -15.982 -25.179 -26.393 0 0)" fill="#fff600"/>
<circle r="2.18" transform="translate(507.6 319.936) matrix(41.911 -15.982 -25.179 -26.393 0 0)" fill="#fff300"/>
<circle r="2.172" transform="translate(507.6 319.322) matrix(41.911 -15.982 -25.179 -26.393 0 0)" fill="#fff000"/>
<circle r="2.163" transform="translate(507.6 318.707) matrix(41.911 -15.982 -25.179 -26.393 0 0)" fill="#ffed00"/>
<circle r="2.154" transform="translate(507.6 318.093) matrix(41.911 -15.982 -25.179 -26.393 0 0)" fill="#ffeb00"/>
<circle r="2.145" transform="translate(507.6 317.479) matrix(41.911 -15.982 -25.179 -26.393 0 0)" fill="#ffe800"/>
<circle r="2.137" transform="translate(507.6 316.865) matrix(41.911 -15.982 -25.179 -26.393 0 0)" fill="#ffe500"/>
<circle r="2.128" transform="translate(507.6 316.251) matrix(41.911 -15.982 -25.179 -26.393 0 0)" fill="#ffe200"/>
<circle r="2.119" transform="translate(507.6 315.637) matrix(41.911 -15.982 -25.179 -26.393 0 0)" fill="#ffdf00"/>
<circle r="2.11" transform="translate(507.6 315.022) matrix(41.911 -15.982 -25.179 -26.393 0 0)" fill="#ffdd00"/>
<circle r="2.101" transform="translate(507.6 314.408) matrix(41.911 -15.982 -25.179 -26.393 0 0)" fill="#ffda00"/>
<circle r="2.092" transform="translate(507.6 313.794) matrix(41.911 -15.982 -25.179 -26.393 0 0)" fill="#ffd700"/>
<circle r="2.083" transform="translate(507.6 313.18) matrix(41.911 -15.982 -25.179 -26.393 0 0)" fill="#ffd400"/>
<circle r="2.074" transform="translate(507.6 312.566) matrix(41.911 -15.982 -25.179 -26.393 0 0)" fill="#ffd100"/>
<circle r="2.065" transform="translate(507.6 311.951) matrix(41.911 -15.982 -25.179 -26.393 0 0)" fill="#ffcf00"/>
<circle r="2.056" transform="translate(507.6 311.337) matrix(41.911 -15.982 -25.179 -26.393 0 0)" fill="#ffcc00"/>
<circle r="2.046" transform="translate(507.6 310.723) matrix(41.911 -15.982 -25.179 -26.393 0 0)" fill="#ffc900"/>
<circle r="2.037" transform="translate(507.6 310.109) matrix(41.911 -15.982 -25.179 -26.393 0 0)" fill="#ffc600"/>
<circle r="2.028" transform="translate(507.6 309.495) matrix(41.911 -15.982 -25.179 -26.393 0 0)" fill="#ffc400"/>
<circle r="2.019" transform="translate(507.6 308.881) matrix(41.911 -15.982 -25.179 -26.393 0 0)" fill="#ffc100"/>
<circle r="2.009" transform="translate(507.6 308.266) matrix(41.911 -15.982 -25.179 -26.393 0 0)" fill="#ffbe00"/>
<circle r="2" transform="translate(507.6 307.652) matrix(41.911 -15.982 -25.179 -26.393 0 0)" fill="#ffbb00"/>
<circle r="1.99" transform="translate(507.6 307.038) matrix(41.911 -15.982 -25.179 -26.393 0 0)" fill="#ffb800"/>
<circle r="1.981" transform="translate(507.6 306.424) matrix(41.911 -15.982 -25.179 -26.393 0 0)" fill="#ffb600"/>
<circle r="1.971" transform="translate(507.6 305.81) matrix(41.911 -15.982 -25.179 -26.393 0 0)" fill="#ffb300"/>
<circle r="1.962" transform="translate(507.6 305.196) matrix(41.911 -15.982 -25.179 -26.393 0 0)" fill="#ffb000"/>
<circle r="1.952" transform="translate(507.6 304.581) matrix(41.911 -15.982 -25.179 -26.393 0 0)" fill="#ffad00"/>
<circle r="1.942" transform="translate(507.6 303.967) matrix(41.911 -15.982 -25.179 -26.393 0 0)" fill="#ffab00"/>
<circle r="1.933" transform="translate(507.6 303.353) matrix(41.911 -15.982 -25.179 -26.393 0 0)" fill="#ffa800"/>
<circle r="1.923" transform="translate(507.6 302.739) matrix(41.911 -15.982 -25.179 -26.393 0 0)" fill="#ffa500"/>
<circle r="1.913" transform="translate(507.6 302.125) matrix(41.911 -15.982 -25.179 -26.393 0 0)" fill="#ffa200"/>
<circle r="1.903" transform="translate(507.6 301.511) matrix(41.911 -15.982 -25.179 -26.393 0 0)" fill="#ff9f00"/>
<circle r="1.893" transform="translate(507.6 300.896) matrix(41.911 -15.982 -25.179 -26.393 0 0)" fill="#ff9d00"/>
<circle r="1.883" transform="translate(507.6 300.282) matrix(41.911 -15.982 -25.179 -26.393 0 0)" fill="#ff9a00"/>
<circle r="1.873" transform="translate(507.6 299.668) matrix(41.911 -15.982 -25.179 -26.393 0 0)" fill="#ff9700"/>
<circle r="1.863" transform="translate(507.6 299.054) matrix(41.911 -15.982 -25.179 -26.393 0 0)" fill="#ff9400"/>
<circle r="1.853" transform="translate(507.6 298.44) matrix(41.911 -15.982 -25.179 -26.393 0 0)" fill="#ff9100"/>
<circle r="1.843" transform="translate(507.6 297.826) matrix(41.911 -15.982 -25.179 -26.393 0 0)" fill="#ff8f00"/>
<circle r="1.832" transform="translate(507.6 297.211) matrix(41.911 -15.982 -25.179 -26.393 0 0)" fill="#ff8c00"/>
<circle r="1.822" transform="translate(507.6 296.597) matrix(41.911 -15.982 -25.179 -26.393 0 0)" fill="#ff8900"/>
<circle r="1.812" transform="translate(507.6 295.983) matrix(41.911 -15.982 -25.179 -26.393 0 0)" fill="#ff8600"/>
<circle r="1.801" transform="translate(507.6 295.369) matrix(41.911 -15.982 -25.179 -26.393 0 0)" fill="#ff8400"/>
<circle r="1.791" transform="translate(507.6 294.755) matrix(41.911 -15.982 -25.179 -26.393 0 0)" fill="#ff8100"/>
<circle r="1.78" transform="translate(507.6 294.14) matrix(41.911 -15.982 -25.179 -26.393 0 0)" fill="#ff7e00"/>
<circle r="1.77" transform="translate(507.6 293.526) matrix(41.911 -15.982 -25.179 -26.393 0 0)" fill="#ff7b00"/>
<circle r="1.759" transform="translate(507.6 292.912) matrix(41.911 -15.982 -25.179 -26.393 0 0)" fill="#ff7800"/>
<circle r="1.748" transform="translate(507.6 292.298) matrix(41.911 -15.982 -25.179 -26.393 0 0)" fill="#ff7600"/>
<circle r="1.737" transform="translate(507.6 291.684) matrix(41.911 -15.982 -25.179 -26.393 0 0)" fill="#ff7300"/>
<circle r="1.726" transform="translate(507.6 291.07) matrix(41.911 -15.982 -25.179 -26.393 0 0)" fill="#ff7000"/>
<circle r="1.715" transform="translate(507.6 290.455) matrix(41.911 -15.982 -25.179 -26.393 0 0)" fill="#ff6d00"/>
<circle r="1.704" transform="translate(507.6 289.841) matrix(41.911 -15.982 -25.179 -26.393 0 0)" fill="#ff6b00"/>
<circle r="1.693" transform="translate(507.6 289.227) matrix(41.911 -15.982 -25.179 -26.393 0 0)" fill="#ff6800"/>
<circle r="1.682" transform="translate(507.6 288.613) matrix(41.911 -15.982 -25.179 -26.393 0 0)" fill="#ff6500"/>
<circle r="1.671" transform="translate(507.6 287.999) matrix(41.911 -15.982 -25.179 -26.393 0 0)" fill="#ff6200"/>
<circle r="1.66" transform="translate(507.6 287.385) matrix(41.911 -15.982 -25.179 -26.393 0 0)" fill="#ff5f00"/>
<circle r="1.648" transform="translate(507.6 286.77) matrix(41.911 -15.982 -25.179 -26.393 0 0)" fill="#ff5d00"/>
<circle r="1.637" transform="translate(507.6 286.156) matrix(41.911 -15.982 -25.179 -26.393 0 0)" fill="#ff5a00"/>
<circle r="1.625" transform="translate(507.6 285.542) matrix(41.911 -15.982 -25.179 -26.393 0 0)" fill="#ff5700"/>
<circle r="1.613" transform="translate(507.6 284.928) matrix(41.911 -15.982 -25.179 -26.393 0 0)" fill="#ff5400"/>
<circle r="1.602" transform="translate(507.6 284.314) matrix(41.911 -15.982 -25.179 -26.393 0 0)" fill="#ff5100"/>
<circle r="1.59" transform="translate(507.6 283.7) matrix(41.911 -15.982 -25.179 -26.393 0 0)" fill="#ff4f00"/>
<circle r="1.578" transform="translate(507.6 283.085) matrix(41.911 -15.982 -25.179 -26.393 0 0)" fill="#ff4c00"/>
<circle r="1.566" transform="translate(507.6 282.471) matrix(41.911 -15.982 -25.179 -26.393 0 0)" fill="#ff4900"/>
<circle r="1.554" transform="translate(507.6 281.857) matrix(41.911 -15.982 -25.179 -26.393 0 0)" fill="#ff4600"/>
<circle r="1.542" transform="translate(507.6 281.243) matrix(41.911 -15.982 -25.179 -26.393 0 0)" fill="#ff4400"/>
<circle r="1.529" transform="translate(507.6 280.629) matrix(41.911 -15.982 -25.179 -26.393 0 0)" fill="#ff4100"/>
<circle r="1.517" transform="translate(507.6 280.015) matrix(41.911 -15.982 -25.179 -26.393 0 0)" fill="#ff3e00"/>
<circle r="1.505" transform="translate(507.6 279.4) matrix(41.911 -15.982 -25.179 -26.393 0 0)" fill="#ff3b00"/>
<circle r="1.492" transform="translate(507.6 278.786) matrix(41.911 -15.982 -25.179 -26.393 0 0)" fill="#ff3800"/>
<circle r="1.479" transform="translate(507.6 278.172) matrix(41.911 -15.982 -25.179 -26.393 0 0)" fill="#ff3600"/>
<circle r="1.466" transform="translate(507.6 277.558) matrix(41.911 -15.982 -25.179 -26.393 0 0)" fill="#ff3300"/>
<circle r="1.454" transform="translate(507.6 276.944) matrix(41.911 -15.982 -25.179 -26.393 0 0)" fill="#ff3000"/>
<circle r="1.44" transform="translate(507.6 276.329) matrix(41.911 -15.982 -25.179 -26.393 0 0)" fill="#ff2d00"/>
<circle r="1.427" transform="translate(507.6 275.715) matrix(41.911 -15.982 -25.179 -26.393 0 0)" fill="#ff2b00"/>
<circle r="1.414" transform="translate(507.6 275.101) matrix(41.911 -15.982 -25.179 -26.393 0 0)" fill="#ff2800"/>
<circle r="1.401" transform="translate(507.6 274.487) matrix(41.911 -15.982 -25.179 -26.393 0 0)" fill="#ff2500"/>
<circle r="1.387" transform="translate(507.6 273.873) matrix(41.911 -15.982 -25.179 -26.393 0 0)" fill="#ff2200"/>
<circle r="1.373" transform="translate(507.6 273.259) matrix(41.911 -15.982 -25.179 -26.393 0 0)" fill="#ff1f00"/>
<circle r="1.36" transform="translate(507.6 272.644) matrix(41.911 -15.982 -25.179 -26.393 0 0)" fill="#ff1d00"/>
<circle r="1.346" transform="translate(507.6 272.03) matrix(41.911 -15.982 -25.179 -26.393 0 0)" fill="#ff1c00"/>
<circle r="1.332" transform="translate(507.6 271.416) matrix(41.911 -15.982 -25.179 -26.393 0 0)" fill="#ff1b00"/>
<circle r="1.317" transform="translate(507.6 270.802) matrix(41.911 -15.982 -25.179 -26.393 0 0)" fill="#ff1a00"/>
<circle r="1.303" transform="translate(507.6 270.188) matrix(41.911 -15.982 -25.179 -26.393 0 0)" fill="#ff1900"/>
<circle r="1.288" transform="translate(507.6 269.574) matrix(41.911 -15.982 -25.179 -26.393 0 0)" fill="#ff1700"/>
<circle r="1.274" transform="translate(507.6 268.959) matrix(41.911 -15.982 -25.179 -26.393 0 0)" fill="#ff1600"/>
<circle r="1.259" transform="translate(507.6 268.345) matrix(41.911 -15.982 -25.179 -26.393 0 0)" fill="#ff1500"/>
<circle r="1.244" transform="translate(507.6 267.731) matrix(41.911 -15.982 -25.179 -26.393 0 0)" fill="#ff1400"/>
<circle r="1.228" transform="translate(507.6 267.117) matrix(41.911 -15.982 -25.179 -26.393 0 0)" fill="#ff1300"/>
<circle r="1.213" transform="translate(507.6 266.503) matrix(41.911 -15.982 -25.179 -26.393 0 0)" fill="#ff1100"/>
<circle r="1.197" transform="translate(507.6 265.889) matrix(41.911 -15.982 -25.179 -26.393 0 0)" fill="#ff1000"/>
<circle r="1.181" transform="translate(507.6 265.274) matrix(41.911 -15.982 -25.179 -26.393 0 0)" fill="#ff0f00"/>
<circle r="1.165" transform="translate(507.6 264.66) matrix(41.911 -15.982 -25.179 -26.393 0 0)" fill="#ff0e00"/>
<circle r="1.149" transform="translate(507.6 264.046) matrix(41.911 -15.982 -25.179 -26.393 0 0)" fill="#ff0d00"/>
<circle r="1.133" transform="translate(507.6 263.432) matrix(41.911 -15.982 -25.179 -26.393 0 0)" fill="#ff0b00"/>
<circle r="1.116" transform="translate(507.6 262.818) matrix(41.911 -15.982 -25.179 -26.393 0 0)" fill="#ff0a00"/>
<circle r="1.099" transform="translate(507.6 262.204) matrix(41.911 -15.982 -25.179 -26.393 0 0)" fill="#ff0900"/>
<circle r="1.081" transform="translate(507.6 261.589) matrix(41.911 -15.982 -25.179 -26.393 0 0)" fill="#ff0800"/>
<circle r="1.064" transform="translate(507.6 260.975) matrix(41.911 -15.982 -25.179 -26.393 0 0)" fill="#ff0700"/>
<circle r="1.046" transform="translate(507.6 260.361) matrix(41.911 -15.982 -25.179 -26.393 0 0)" fill="#ff0500"/>
<circle r="1.028" transform="translate(507.6 259.747) matrix(41.911 -15.982 -25.179 -26.393 0 0)" fill="#ff0400"/>
<circle r="1.009" transform="translate(507.6 259.133) matrix(41.911 -15.982 -25.179 -26.393 0 0)" fill="#ff0300"/>
<circle r="0.99" transform="translate(507.6 258.518) matrix(41.911 -15.982 -25.179 -26.393 0 0)" fill="#ff0200"/>
<circle r="0.971" transform="translate(507.6 257.904) matrix(41.911 -15.982 -25.179 -26.393 0 0)" fill="#ff0100"/>
<circle r="0.952" transform="translate(507.6 257.29) matrix(41.911 -15.982 -25.179 -26.393 0 0)" fill="#ff0606"/>
<circle r="0.932" transform="translate(507.6 256.676) matrix(41.911 -15.982 -25.179 -26.393 0 0)" fill="#ff1414"/>
<circle r="0.911" transform="translate(507.6 256.062) matrix(41.911 -15.982 -25.179 -26.393 0 0)" fill="#ff2323"/>
<circle r="0.89" transform="translate(507.6 255.448) matrix(41.911 -15.982 -25.179 -26.393 0 0)" fill="#ff3030"/>
<circle r="0.869" transform="translate(507.6 254.833) matrix(41.911 -15.982 -25.179 -26.393 0 0)" fill="#ff3e3e"/>
<circle r="0.847" transform="translate(507.6 254.219) matrix(41.911 -15.982 -25.179 -26.393 0 0)" fill="#ff4b4b"/>
<circle r="0.824" transform="translate(507.6 253.605) matrix(41.911 -15.982 -25.179 -26.393 0 0)" fill="#ff5858"/>
<circle r="0.801" transform="translate(507.6 252.991) matrix(41.911 -15.982 -25.179 -26.393 0 0)" fill="#ff6565"/>
<circle r="0.777" transform="translate(507.6 252.377) matrix(41.911 -15.982 -25.179 -26.393 0 0)" fill="#ff7171"/>
<circle r="0.752" transform="translate(507.6 251.763) matrix(41.911 -15.982 -25.179 -26.393 0 0)" fill="#ff7e7e"/>
<circle r="0.727" transform="translate(507.6 251.148) matrix(41.911 -15.982 -25.179 -26.393 0 0)" fill="#ff8989"/>
<circle r="0.7" transform="translate(507.6 250.534) matrix(41.911 -15.982 -25.179 -26.393 0 0)" fill="#ff9595"/>
<circle r="0.673" transform="translate(507.6 249.92) matrix(41.911 -15.982 -25.179 -26.393 0 0)" fill="#ffa0a0"/>
<circle r="0.644" transform="translate(507.6 249.306) matrix(41.911 -15.982 -25.179 -26.393 0 0)" fill="#ffabab"/>
<circle r="0.614" transform="translate(507.6 248.692) matrix(41.911 -15.982 -25.179 -26.393 0 0)" fill="#ffb6b6"/>
<circle r="0.583" transform="translate(507.6 248.078) matrix(41.911 -15.982 -25.179 -26.393 0 0)" fill="#ffc0c0"/>
<circle r="0.549" transform="translate(507.6 247.463) matrix(41.911 -15.982 -25.179 -26.393 0 0)" fill="#ffc9c9"/>
<circle r="0.514" transform="translate(507.6 246.849) matrix(41.911 -15.982 -25.179 -26.393 0 0)" fill="#ffd3d3"/>
<circle r="0.476" transform="translate(507.6 246.235) matrix(41.911 -15.982 -25.179 -26.393 0 0)" fill="#ffdbdb"/>
<circle r="0.434" transform="translate(507.6 245.621) matrix(41.911 -15.982 -25.179 -26.393 0 0)" fill="#ffe3e3"/>
<circle r="0.388" transform="translate(507.6 245.007) matrix(41.911 -15.982 -25.179 -26.393 0 0)" fill="#ffeaea"/>
<circle r="0.336" transform="translate(507.6 244.393) matrix(41.911 -15.982 -25.179 -26.393 0 0)" fill="#fff1f1"/>
<circle r="0.275" transform="translate(507.6 243.778) matrix(41.911 -15.982 -25.179 -26.393 0 0)" fill="#fff7f7"/>
<circle r="0.194" transform="translate(507.6 243.164) matrix(41.911 -15.982 -25.179 -26.393 0 0)" fill="#fffbfb"/>
<circle r="0.02" transform="translate(507.6 242.55) matrix(41.911 -15.982 -25.179 -26.393 0 0)" fill="#ffffff"/>
</g>
<clipPath id="wclip"><path d="M465.9 551L463.8 542.1L461.7 533.5L459.6 525.1L457.5 517L455.4 509L453.3 501.3L451.2 493.8L449.2 486.6L447.1 479.5L445 472.7L442.9 466.1L440.8 459.8L438.7 453.6L436.6 447.7L434.5 442L432.4 436.6L430.3 431.3L428.2 426.3L426.1 421.5L424 417L421.9 412.6L419.8 408.5L417.7 404.6L415.6 401L413.6 397.6L411.5 394.3L409.4 391.4L407.3 388.6L405.2 386.1L403.1 383.8L401 381.7L398.9 379.8L396.8 378.2L394.7 376.8L392.6 375.6L390.5 374.6L388.4 373.9L386.3 373.4L384.2 373.1L382.1 373.1L380 373.2L378 373.6L375.9 374.3L373.8 375.1L371.7 376.2L369.6 377.5L367.5 379L365.4 380.7L363.3 382.7L361.2 384.9L359.1 387.3L357 390L354.9 392.8L352.8 395.9L350.7 399.3L348.6 402.8L346.5 406.6L344.5 410.6L342.4 414.8L340.3 419.3L340.3 420.9L465.9 552.6ZM465.9 551L469.4 543L472.9 535.2L476.4 527.7L479.8 520.4L483.3 513.3L486.8 506.5L490.3 499.9L493.8 493.5L497.3 487.3L500.8 481.4L504.2 475.6L507.7 470.1L511.2 464.9L514.7 459.8L518.2 455L521.7 450.4L525.2 446L528.6 441.9L532.1 438L535.6 434.3L539.1 430.8L542.6 427.6L546.1 424.6L549.6 421.8L553 419.2L556.5 416.9L560 414.7L563.5 412.8L567 411.2L570.5 409.7L574 408.5L577.4 407.5L580.9 406.8L584.4 406.2L587.9 405.9L591.4 405.8L594.9 406L598.4 406.3L601.8 406.9L605.3 407.7L608.8 408.7L612.3 410L615.8 411.5L619.3 413.2L622.8 415.1L626.2 417.3L629.7 419.7L633.2 422.3L636.7 425.1L640.2 428.2L643.7 431.5L647.2 435L650.6 438.7L654.1 442.7L657.6 446.9L661.1 451.3L664.6 455.9L668.1 460.8L671.6 465.9L675 471.2L675 472.8L465.9 552.6Z"/></clipPath>
<path d="M465.9 551L463.8 542.1L461.7 533.5L459.6 525.1L457.5 517L455.4 509L453.3 501.3L451.2 493.8L449.2 486.6L447.1 479.5L445 472.7L442.9 466.1L440.8 459.8L438.7 453.6L436.6 447.7L434.5 442L432.4 436.6L430.3 431.3L428.2 426.3L426.1 421.5L424 417L421.9 412.6L419.8 408.5L417.7 404.6L415.6 401L413.6 397.6L411.5 394.3L409.4 391.4L407.3 388.6L405.2 386.1L403.1 383.8L401 381.7L398.9 379.8L396.8 378.2L394.7 376.8L392.6 375.6L390.5 374.6L388.4 373.9L386.3 373.4L384.2 373.1L382.1 373.1L380 373.2L378 373.6L375.9 374.3L373.8 375.1L371.7 376.2L369.6 377.5L367.5 379L365.4 380.7L363.3 382.7L361.2 384.9L359.1 387.3L357 390L354.9 392.8L352.8 395.9L350.7 399.3L348.6 402.8L346.5 406.6L344.5 410.6L342.4 414.8L340.3 419.3L340.3 420.9L465.9 552.6ZM465.9 551L469.4 543L472.9 535.2L476.4 527.7L479.8 520.4L483.3 513.3L486.8 506.5L490.3 499.9L493.8 493.5L497.3 487.3L500.8 481.4L504.2 475.6L507.7 470.1L511.2 464.9L514.7 459.8L518.2 455L521.7 450.4L525.2 446L528.6 441.9L532.1 438L535.6 434.3L539.1 430.8L542.6 427.6L546.1 424.6L549.6 421.8L553 419.2L556.5 416.9L560 414.7L563.5 412.8L567 411.2L570.5 409.7L574 408.5L577.4 407.5L580.9 406.8L584.4 406.2L587.9 405.9L591.4 405.8L594.9 406L598.4 406.3L601.8 406.9L605.3 407.7L608.8 408.7L612.3 410L615.8 411.5L619.3 413.2L622.8 415.1L626.2 417.3L629.7 419.7L633.2 422.3L636.7 425.1L640.2 428.2L643.7 431.5L647.2 435L650.6 438.7L654.1 442.7L657.6 446.9L661.1 451.3L664.6 455.9L668.1 460.8L671.6 465.9L675 471.2L675 472.8L465.9 552.6Z" fill="#000"/>
<use href="#grid" clip-path="url(#wclip)"/>
<path d="M568.1 253.3L567.4 252.7L566.8 252L566.1 251.4L565.4 250.7L564.7 250.1L563.9 249.5L563.2 248.9L562.4 248.3L561.6 247.7L560.9 247.1M454.5 247.3L453.7 247.9L452.9 248.5L452.1 249.1L451.4 249.7L450.6 250.4L449.9 251L449.2 251.6L448.5 252.3L447.9 252.9L447.2 253.6L446.6 254.3L446 255L445.4 255.6L444.8 256.3L444.3 257L443.8 257.7L443.3 258.4L442.8 259.1L442.3 259.9L441.8 260.6L441.4 261.3L441 262L440.6 262.8L440.2 263.5L439.9 264.3L439.6 265L439.3 265.8L439 266.5L438.7 267.3L438.5 268L438.2 268.8L438 269.6L437.8 270.3L437.7 271.1L437.5 271.9L437.4 272.7L437.3 273.4L437.3 274.2L437.2 275L437.2 275.8L437.2 276.5L437.2 277.3L437.2 278.1L437.3 278.9L437.3 279.6L437.4 280.4L437.5 281.2L437.7 282L437.8 282.7L438 283.5L438.2 284.3L438.5 285L438.7 285.8L439 286.5L439.3 287.3L439.6 288L439.9 288.8L440.2 289.5L440.6 290.3L441 291L441.4 291.7L441.8 292.5L442.3 293.2L442.8 293.9L443.3 294.6L443.8 295.3L444.3 296L444.8 296.7L445.4 297.4L446 298.1L446.6 298.8L447.2 299.4L447.9 300.1L448.5 300.7L449.2 301.4L449.9 302L450.6 302.7L451.4 303.3L452.1 303.9L452.9 304.5L453.7 305.1L454.4 305.7L455.3 306.3L456.1 306.8L456.9 307.4L457.8 307.9L458.7 308.5L459.6 309L460.5 309.5L461.4 310.1L462.3 310.6L463.3 311.1L464.3 311.5L465.2 312L466.2 312.5L467.2 312.9L468.2 313.3L469.3 313.8L470.3 314.2L471.3 314.6L472.4 315L473.5 315.4L474.6 315.7L475.6 316.1L476.7 316.4L477.9 316.8L479 317.1L480.1 317.4L481.2 317.7L482.4 318L483.5 318.2L484.7 318.5L485.9 318.7L487 319L488.2 319.2L489.4 319.4M524.7 319.5L525.9 319.3L527.1 319.1L528.3 318.9L529.4 318.6L530.6 318.4L531.8 318.1L532.9 317.9L534.1 317.6L535.2 317.3L536.3 317L537.4 316.6L538.5 316.3L539.6 315.9L540.7 315.6L541.8 315.2L542.9 314.8L543.9 314.4L545 314L546 313.6L547.1 313.2L548.1 312.7L549.1 312.3L550.1 311.8L551 311.3L552 310.9L553 310.4L553.9 309.9L554.8 309.3L555.7 308.8L556.6 308.3L557.5 307.7L558.4 307.2L559.2 306.6L560 306L560.8 305.5L561.6 304.9L562.4 304.3L563.2 303.7L563.9 303L564.7 302.4L565.4 301.8L566.1 301.1L566.8 300.5L567.4 299.8L568.1 299.2L568.7 298.5L569.3 297.8L569.9 297.1L570.5 296.4L571 295.7L571.5 295L572 294.3L572.5 293.6L573 292.9L573.5 292.2L573.9 291.5L574.3 290.7L574.7 290L575.1 289.2L575.4 288.5L575.7 287.8L576 287L576.3 286.2L576.6 285.5L576.8 284.7L577.1 284L577.3 283.2L577.5 282.4L577.6 281.7L577.8 280.9L577.9 280.1L578 279.3L578 278.6L578.1 277.8L578.1 277L578.1 276.2L578.1 275.5L578.1 274.7L578 273.9L578 273.1L577.9 272.4L577.8 271.6L577.6 270.8L577.5 270L577.3 269.3L577.1 268.5L576.8 267.7L576.6 267L576.3 266.2L576 265.5L575.7 264.7L575.4 264L575.1 263.2L574.7 262.5L574.3 261.8L573.9 261L573.5 260.3L573 259.6L572.5 258.9L572 258.2L571.5 257.4L571 256.7L570.5 256.1L569.9 255.4L569.3 254.7L568.7 254L568.1 253.3M418.8 281.9L418.1 282.8L417.3 283.8L416.6 284.8L415.9 285.8L415.2 286.9L414.6 287.9L414 288.9L413.4 289.9L412.8 291L412.3 292L411.8 293.1L411.4 294.1L410.9 295.2L410.5 296.3L410.1 297.4L409.8 298.4L409.5 299.5L409.2 300.6L408.9 301.7L408.7 302.8L408.5 303.9L408.3 305L408.2 306L408.1 307.1L408 308.2L408 309.3L408 310.4L408 311.5L408 312.6L408.1 313.7L408.2 314.8L408.3 315.9L408.5 317L408.7 318.1L408.9 319.2L409.2 320.3L409.5 321.4L409.8 322.4L410.1 323.5L410.5 324.6L410.9 325.6L411.4 326.7L411.8 327.8L412.3 328.8L412.8 329.9L413.4 330.9L414 331.9L414.6 333L415.2 334L415.9 335L416.6 336L417.3 337L418.1 338L418.8 339L419.6 339.9L420.5 340.9L421.3 341.9L422.2 342.8L423.1 343.7L424 344.7L425 345.6L426 346.5L427 347.4L428 348.3L429.1 349.1L430.2 350L431.3 350.8L432.4 351.7L433.6 352.5L434.7 353.3L435.9 354.1L437.2 354.9L438.4 355.6L439.7 356.4L440.9 357.1L442.2 357.8L443.6 358.5L444.9 359.2L446.3 359.9L447.7 360.6L449.1 361.2L450.5 361.9L451.9 362.5L453.4 363.1L454.8 363.7L456.3 364.3L457.8 364.8L459.3 365.3L460.8 365.9L462.4 366.4L463.9 366.9L465.5 367.3L467.1 367.8L468.7 368.2L470.3 368.6L471.9 369L473.5 369.4L475.2 369.8L476.8 370.1L478.5 370.4L480.2 370.8L481.8 371L483.5 371.3L485.2 371.6L486.9 371.8L488.6 372L490.3 372.2M525 372.1L526.7 371.9L528.4 371.7L530.1 371.5L531.8 371.2L533.4 370.9L535.1 370.6L536.8 370.3L538.4 370L540.1 369.6L541.7 369.3L543.4 368.9L545 368.5L546.6 368L548.2 367.6L549.8 367.1L551.3 366.7L552.9 366.2L554.4 365.7L556 365.1L557.5 364.6L559 364L560.5 363.5L561.9 362.9L563.4 362.3L564.8 361.6L566.2 361L567.6 360.3L569 359.7L570.4 359L571.7 358.3L573 357.6L574.3 356.8L575.6 356.1L576.9 355.3L578.1 354.5L579.4 353.8L580.5 353L581.7 352.2L582.9 351.3L584 350.5L585.1 349.6L586.2 348.8L587.3 347.9L588.3 347L589.3 346.1L590.3 345.2L591.2 344.3L592.2 343.4L593.1 342.4L594 341.5L594.8 340.5L595.7 339.6L596.5 338.6L597.2 337.6L598 336.6L598.7 335.6L599.4 334.6L600.1 333.6L600.7 332.6L601.3 331.5L601.9 330.5L602.5 329.5L603 328.4L603.5 327.4L603.9 326.3L604.4 325.2L604.8 324.2L605.2 323.1L605.5 322L605.8 320.9L606.1 319.8L606.4 318.8L606.6 317.7L606.8 316.6L607 315.5L607.1 314.4L607.2 313.3L607.3 312.2L607.3 311.1L607.3 310L607.3 308.9L607.3 307.8L607.2 306.7L607.1 305.6L607 304.5L606.8 303.4L606.6 302.3L606.4 301.3L606.1 300.2L605.8 299.1L605.5 298L605.2 296.9L604.8 295.9L604.4 294.8L603.9 293.7L603.5 292.7L603 291.6L602.5 290.6L601.9 289.5L601.3 288.5L600.7 287.5L600.1 286.5L599.4 285.4L598.7 284.4L598 283.4L597.2 282.4L596.5 281.5M394.5 315.4L393.7 316.7L392.9 318L392.2 319.2L391.5 320.5L390.9 321.8L390.3 323.1L389.7 324.4L389.2 325.7L388.7 327L388.2 328.3L387.8 329.6L387.4 330.9L387.1 332.3L386.8 333.6L386.5 334.9L386.2 336.3L386 337.6L385.9 338.9L385.7 340.3L385.6 341.6L385.6 343L385.6 344.3L385.6 345.7L385.6 347L385.7 348.4L385.9 349.7L386 351L386.2 352.4L386.5 353.7L386.7 355L387.1 356.4L387.4 357.7L387.8 359L388.2 360.3L388.7 361.6L389.2 363L389.7 364.3L390.3 365.5L390.9 366.8L391.5 368.1L392.2 369.4L392.9 370.7L393.7 371.9L394.4 373.2L395.3 374.4L396.1 375.6L397 376.9L397.9 378.1L398.9 379.3L399.8 380.5M406.4 387.4L407.6 388.5L408.9 389.6L410.1 390.6L411.4 391.7L412.8 392.7L414.1 393.8L415.5 394.8L416.9 395.8L418.4 396.8L419.8 397.8L421.3 398.7L422.8 399.7L424.4 400.6L426 401.5L427.5 402.4L429.2 403.2L430.8 404.1L432.5 404.9L434.2 405.7L435.9 406.5L437.6 407.3L439.4 408.1L441.1 408.8L442.9 409.5L444.8 410.2L446.6 410.9L448.5 411.6L450.3 412.2L452.2 412.8L454.1 413.4L456 414L458 414.5L459.9 415.1L461.9 415.6L463.9 416.1L465.9 416.5L467.9 417L469.9 417.4L471.9 417.8L474 418.2L476 418.5L478.1 418.9L480.2 419.2L482.3 419.5L484.3 419.7L486.4 420L488.5 420.2M524.6 420.3L526.7 420.1L528.8 419.9L530.9 419.6L533 419.4L535.1 419.1L537.2 418.7L539.2 418.4L541.3 418L543.3 417.7L545.4 417.2L547.4 416.8L549.4 416.4L551.4 415.9L553.4 415.4L555.3 414.9L557.3 414.3L559.2 413.8L561.2 413.2L563.1 412.6L565 412M575.9 407.8L577.7 407L579.4 406.2L581.1 405.4L582.8 404.6L584.5 403.8L586.1 402.9L587.7 402L589.3 401.1L590.9 400.2L592.5 399.3L594 398.3L595.5 397.4L596.9 396.4L598.4 395.4L599.8 394.4L601.2 393.4L602.5 392.3L603.9 391.3L605.1 390.2L606.4 389.1L607.7 388L608.9 386.9L610 385.8L611.2 384.7L612.3 383.5L613.4 382.3L614.4 381.2L615.4 380L616.4 378.8L617.4 377.6L618.3 376.4L619.2 375.2L620 373.9L620.8 372.7L621.6 371.4L622.4 370.2L623.1 368.9L623.8 367.6L624.4 366.3L625 365L625.6 363.7L626.1 362.4L626.6 361.1L627.1 359.8L627.5 358.5L627.9 357.2L628.2 355.8L628.5 354.5L628.8 353.2L629.1 351.8L629.3 350.5L629.4 349.2L629.6 347.8L629.7 346.5L629.7 345.1L629.7 343.8L629.7 342.4L629.7 341.1L629.6 339.8L629.4 338.4L629.3 337.1L629.1 335.7L628.8 334.4L628.6 333.1L628.2 331.7L627.9 330.4L627.5 329.1L627.1 327.8L626.6 326.5L626.1 325.2L625.6 323.9L625 322.6L624.4 321.3L623.8 320L623.1 318.7L622.4 317.5L621.6 316.2L620.9 314.9M374.4 349.2L373.6 350.7L372.8 352.2L372.1 353.7L371.5 355.2L370.9 356.7L370.3 358.2L369.8 359.7L369.3 361.2L368.8 362.7L368.4 364.3L368 365.8L367.7 367.4L367.4 368.9L367.2 370.4L367 372L366.9 373.5L366.8 375.1L366.7 376.6L366.7 378.2M441.5 456.6L443.6 457.3L445.8 458L448.1 458.6L450.3 459.3L452.6 459.9L454.8 460.5L457.1 461.1L459.4 461.6L461.7 462.1L464.1 462.6L466.4 463.1L468.8 463.5L471.2 463.9L473.5 464.3L475.9 464.6L478.3 465L480.7 465.3L483.2 465.6L485.6 465.8L488 466M632.1 419.4L633.3 418L634.4 416.6L635.4 415.2L636.4 413.8L637.4 412.4L638.4 410.9L639.3 409.5L640.1 408L640.9 406.6L641.7 405.1L642.5 403.6L643.2 402.1L643.8 400.6L644.4 399.1L645 397.6L645.5 396.1L646 394.6L646.5 393L646.9 391.5L647.3 390L647.6 388.4L647.9 386.9L648.1 385.3L648.3 383.8L648.4 382.2L648.5 380.7L648.6 379.1L648.6 377.6M356.9 383L356.1 384.6L355.4 386.3L354.7 388L354.1 389.7L353.5 391.4L352.9 393.1L352.4 394.8L352 396.5M456.3 505.9L458.9 506.4L461.6 506.9L464.2 507.4L466.8 507.9L469.5 508.3L472.2 508.7L474.9 509.1L477.6 509.4L480.3 509.7L483 510M656.7 443.8L657.5 442.1L658.4 440.5L659.2 438.8L659.9 437.1L660.6 435.5L661.2 433.8L661.8 432.1L662.4 430.4L662.9 428.7L663.3 426.9" fill="none" stroke="#000" stroke-width="1.1" stroke-dasharray="1.5 2.2 1.5 2.2 1.5 4" opacity="0.85"/>
<path d="M492 319.8L492.8 319.9L493.5 320L494.2 320.1L495 320.2L495.7 320.3L496.5 320.3M498.4 320.5L499.8 320.6L501.1 320.7L502.5 320.8L503.8 320.8L505.2 320.8L506.5 320.9M508.3 320.9L509.7 320.8L511 320.8L512.3 320.8L513.7 320.7L515 320.6L516.4 320.5M519.3 320.2L519.8 320.2L520.3 320.1L520.8 320.1L521.3 320L521.8 319.9L522.3 319.9M491.9 372.4L492.6 372.4L493.4 372.5L494.1 372.6L494.8 372.6L495.6 372.7L496.3 372.7M498.3 372.9L499.7 372.9L501 373L502.4 373.1L503.7 373.1L505.1 373.1L506.4 373.1M508.2 373.1L509.6 373.1L510.9 373.1L512.2 373.1L513.6 373L514.9 372.9L516.3 372.9M519.3 372.7L519.8 372.6L520.3 372.6L520.8 372.6L521.3 372.5L521.8 372.5L522.2 372.4M491.8 420.5L492.5 420.5L493.3 420.6L494 420.6L494.7 420.7L495.5 420.7L496.2 420.8M498.2 420.9L499.6 421L500.9 421L502.3 421L503.6 421.1L505 421.1L506.3 421.1M508.1 421.1L509.5 421.1L510.8 421.1L512.2 421L513.5 421L514.9 421L516.2 420.9M519.2 420.7L519.7 420.7L520.2 420.7L520.7 420.6L521.2 420.6L521.7 420.6L522.2 420.5M491.7 466.3L492.4 466.4L493.2 466.4L493.9 466.5L494.7 466.5L495.4 466.5L496.2 466.6M498.2 466.7L499.5 466.7L500.9 466.8L502.2 466.8L503.6 466.8L504.9 466.8L506.3 466.9M508.1 466.9L509.4 466.8" fill="none" stroke="#000" stroke-width="1.2" opacity="0.92"/>
<g fill="#fff" font-family="'Liberation Sans', sans-serif" font-size="16">
<text text-anchor="end" transform="matrix(1.066 -0.407 0 1.017 303.3 224.7)" y="0">0,00</text>
<text text-anchor="end" transform="matrix(1.066 -0.407 0 1.017 303.3 267.3)" y="0">-40,00</text>
<text text-anchor="end" transform="matrix(1.066 -0.407 0 1.017 303.3 309.8)" y="0">-80,00</text>
<text text-anchor="end" transform="matrix(1.066 -0.407 0 1.017 303.3 352.4)" y="0">-120,00</text>
<text text-anchor="end" transform="matrix(1.066 -0.407 0 1.017 303.3 394.9)" y="0">-160,00</text>
<text text-anchor="end" transform="matrix(1.066 -0.407 0.674 0.707 306.2 434.8)" y="0">2,8</text>
<text text-anchor="end" transform="matrix(1.066 -0.407 0.674 0.707 341.4 471.8)" y="0">1,4</text>
<text text-anchor="end" transform="matrix(1.066 -0.407 0.674 0.707 376.7 508.7)" y="0">0,0</text>
<text text-anchor="end" transform="matrix(1.066 -0.407 0.674 0.707 411.9 545.6)" y="0">-1,4</text>
<text text-anchor="end" transform="matrix(1.066 -0.407 0.674 0.707 447.2 582.6)" y="0">-2,8</text>
<text text-anchor="middle" transform="matrix(0.64 0.671 -1.122 0.428 479.3 593)" y="5.5">-2,8</text>
<text text-anchor="middle" transform="matrix(0.64 0.671 -1.122 0.428 538 570.6)" y="5.5">-1,4</text>
<text text-anchor="middle" transform="matrix(0.64 0.671 -1.122 0.428 596.6 548.2)" y="5.5">0,0</text>
<text text-anchor="middle" transform="matrix(0.64 0.671 -1.122 0.428 655.3 525.9)" y="5.5">1,4</text>
<text text-anchor="middle" transform="matrix(0.64 0.671 -1.122 0.428 714 503.5)" y="5.5">2,8</text>
<text text-anchor="middle" transform="matrix(1.01 -0.385 0.674 0.707 620 573)" y="5.5">x / mm</text>
<text text-anchor="middle" transform="matrix(0.587 0.615 -1.122 0.428 321.5 525.5)" y="5.5">y / mm</text>
<text text-anchor="middle" transform="matrix(0 -0.967 1.122 -0.428 225 355)" y="4.5">um</text>
</g>
</svg>
</div>
</body>
</html>
